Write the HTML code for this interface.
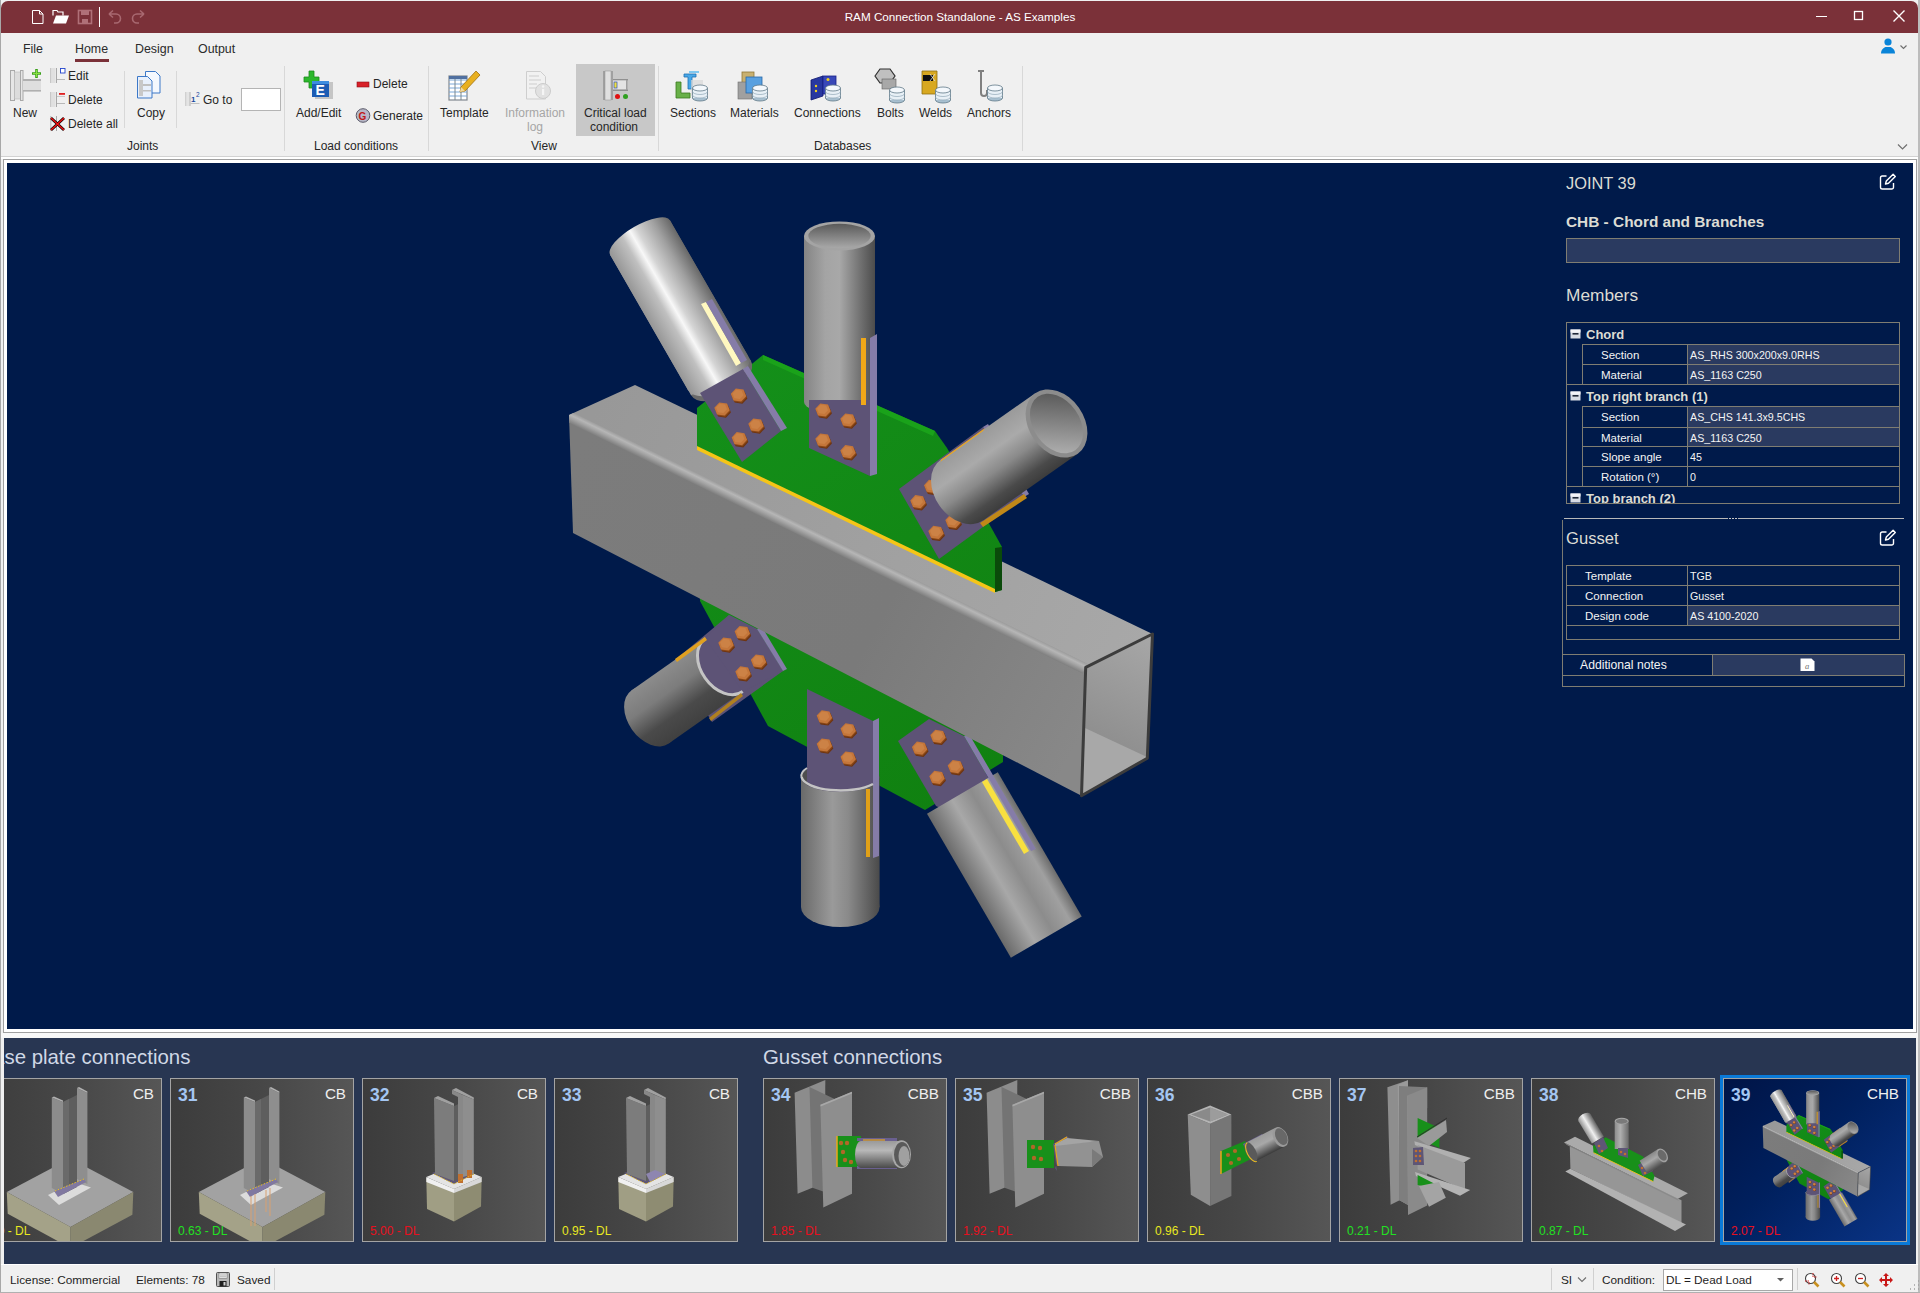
<!DOCTYPE html>
<html><head><meta charset="utf-8"><style>
*{margin:0;padding:0;box-sizing:border-box}
html,body{width:1920px;height:1293px;overflow:hidden;background:#f0f0f0;font-family:"Liberation Sans",sans-serif;color:#000}
.a{position:absolute;white-space:nowrap}
svg{position:absolute;overflow:visible}
</style></head><body>
<div class="a" style="left:0px;top:0px;width:1920px;height:1293px;background:#f0f0f0"></div>
<div class="a" style="left:1px;top:1px;width:1917px;height:32px;background:#7b3139;border-radius:7px 7px 0 0"></div>
<div class="a" style="left:660.0px;width:600px;text-align:center;top:10.41px;font-size:11.7px;line-height:13.07px;color:#ffffff;">RAM Connection Standalone - AS Examples</div>
<svg style="left:0;top:0" width="160" height="33">
<path d="M32.5 10.5h7l3.5 3.5v9.5h-10.5z M39.5 10.5v3.5h3.5" fill="none" stroke="#fff" stroke-width="1"/>
<path d="M53 15.5v-5h4l1 1.5h5v3.5" fill="none" stroke="#fff" stroke-width="1.2"/>
<path d="M53 23.5l3-8h13l-3 8z" fill="#fff"/>
<rect x="78.5" y="10.5" width="13" height="13" fill="none" stroke="#b07078" stroke-width="1.6"/>
<rect x="81" y="11" width="8" height="4" fill="#b07078"/><rect x="82" y="19" width="6" height="4" fill="#b07078"/>
<line x1="99.5" y1="7" x2="99.5" y2="27" stroke="#fff" stroke-width="1"/>
<path d="M109 14l4-3.5M109 14l4 3.5M109 14h7a4.5 4.5 0 0 1 0 9h-2" fill="none" stroke="#a86870" stroke-width="1.6"/>
<path d="M144 14l-4-3.5M144 14l-4 3.5M144 14h-7a4.5 4.5 0 0 0 0 9h2" fill="none" stroke="#a86870" stroke-width="1.6"/>
</svg>
<svg style="left:1780;top:0" width="140" height="33">
<line x1="36" y1="16.5" x2="47" y2="16.5" stroke="#fff" stroke-width="1"/>
<rect x="74.5" y="11.5" width="8" height="8" fill="none" stroke="#fff" stroke-width="1.3"/>
<path d="M113.5 10.5l11 11M124.5 10.5l-11 11" stroke="#fff" stroke-width="1.4"/>
</svg>
<div class="a" style="left:23.0px;top:42.58px;font-size:12.4px;line-height:13.85px;color:#2b2b2b;">File</div>
<div class="a" style="left:75.0px;top:42.58px;font-size:12.4px;line-height:13.85px;color:#2b2b2b;">Home</div>
<div class="a" style="left:75px;top:59px;width:34px;height:3px;background:#7b3139"></div>
<div class="a" style="left:135.0px;top:42.58px;font-size:12.4px;line-height:13.85px;color:#2b2b2b;">Design</div>
<div class="a" style="left:198.0px;top:42.58px;font-size:12.4px;line-height:13.85px;color:#2b2b2b;">Output</div>
<svg style="left:1870;top:36" width="50" height="20">
<circle cx="18" cy="6" r="3.6" fill="#0a84d8"/><path d="M11 17.5c0-4 3-6 4.5-6.5h5c1.5.5 4.5 2.5 4.5 6.5z" fill="#0a84d8"/>
<path d="M30.5 9.5l3 3 3-3" fill="none" stroke="#707070" stroke-width="1.2"/>
</svg>
<svg style="left:1895;top:140" width="20" height="14"><path d="M3 4.5l4.5 4.5 4.5-4.5" fill="none" stroke="#707070" stroke-width="1.2"/></svg>
<div class="a" style="left:124px;top:71px;width:1px;height:57px;background:#d8d8d8"></div>
<div class="a" style="left:176px;top:71px;width:1px;height:57px;background:#d8d8d8"></div>
<div class="a" style="left:284px;top:66px;width:1px;height:85px;background:#d8d8d8"></div>
<div class="a" style="left:428px;top:66px;width:1px;height:85px;background:#d8d8d8"></div>
<div class="a" style="left:658px;top:66px;width:1px;height:85px;background:#d8d8d8"></div>
<div class="a" style="left:1022px;top:66px;width:1px;height:85px;background:#d8d8d8"></div>
<svg style="left:0;top:60" width="180" height="80">
<rect x="10.5" y="10.5" width="4" height="30" fill="#e6e6e6" stroke="#a8a8a8"/>
<rect x="14.5" y="12" width="6" height="27" fill="#dcdcdc" stroke="#b8b8b8" stroke-width="0.6"/>
<rect x="20.5" y="10.5" width="2.5" height="30" fill="#e6e6e6" stroke="#a8a8a8"/>
<rect x="23" y="19" width="18" height="2" fill="#b0b0b0"/><rect x="23" y="21" width="18" height="9" fill="#dedede"/><rect x="23" y="30" width="18" height="1.6" fill="#b0b0b0"/>
<path d="M36.5 9v9M32 13.5h9" stroke="#3aa01a" stroke-width="2.6"/><path d="M36.5 10v7M33 13.5h7" stroke="#88e040" stroke-width="1.2"/>
<rect x="50" y="8" width="1.5" height="15" fill="#c8c8c8"/><rect x="51.5" y="8" width="4" height="15" fill="#e0e0e0"/><rect x="56" y="8" width="1" height="15" fill="#a8a8a8"/><rect x="57" y="19" width="8" height="1" fill="#b8b8b8"/>
<rect x="60.5" y="8.5" width="4.5" height="4.5" fill="#fff" stroke="#2244cc" stroke-width="0.9"/>
<rect x="50" y="32" width="1.5" height="15" fill="#c8c8c8"/><rect x="51.5" y="32" width="4" height="15" fill="#e0e0e0"/><rect x="56" y="32" width="1" height="15" fill="#a8a8a8"/><rect x="57" y="43" width="8" height="1" fill="#b8b8b8"/><rect x="57" y="36" width="8" height="1" fill="#c8c8c8"/>
<rect x="59" y="33" width="6" height="1.8" fill="#e02020"/>
<rect x="50" y="56" width="1.5" height="15" fill="#c8c8c8"/><rect x="56" y="56" width="1" height="15" fill="#a8a8a8"/>
<path d="M51 58l13 12M64 58l-13 12" stroke="#000" stroke-width="2.8"/><path d="M51 58l13 12M64 58l-13 12" stroke="#f01010" stroke-width="1.6"/>
<path d="M145.5 11.5h10l4.5 4.5v17h-14.5z" fill="#f4f8fe" stroke="#3c78c8"/>
<path d="M137.5 16.5h10l4.5 4.5v17h-14.5z" fill="#e8f0fc" stroke="#3c78c8"/>
<rect x="139" y="20" width="4" height="16" fill="#c8c8c8"/><rect x="143" y="24" width="8" height="2" fill="#c0c0c0"/><rect x="143" y="30" width="8" height="1.5" fill="#c0c0c0"/>
<rect x="185" y="32" width="1.5" height="14" fill="#d0d0d0"/>
</svg>
<div class="a" style="left:13.0px;top:106.94px;font-size:12px;line-height:13.40px;color:#262626;">New</div>
<div class="a" style="left:68.0px;top:69.94px;font-size:12px;line-height:13.40px;color:#262626;">Edit</div>
<div class="a" style="left:68.0px;top:93.94px;font-size:12px;line-height:13.40px;color:#262626;">Delete</div>
<div class="a" style="left:68.0px;top:117.94px;font-size:12px;line-height:13.40px;color:#262626;">Delete all</div>
<div class="a" style="left:137.0px;top:106.94px;font-size:12px;line-height:13.40px;color:#262626;">Copy</div>
<div class="a" style="left:127.0px;top:139.94px;font-size:12px;line-height:13.40px;color:#262626;">Joints</div>
<svg style="left:180;top:85" width="30" height="25">
<rect x="5" y="7" width="1.5" height="14" fill="#d0d0d0"/><rect x="6.5" y="7" width="3" height="14" fill="#e4e4e4"/><rect x="9.5" y="7" width="1" height="14" fill="#b0b0b0"/>
<rect x="10.5" y="18" width="9" height="1" fill="#c0c0c0"/>
<text x="11" y="17" font-size="8" fill="#1a4aa0" font-family="Liberation Sans" font-weight="bold">1</text><text x="16" y="12" font-size="6.5" fill="#1a4aa0" font-family="Liberation Sans">2</text>
</svg>
<div class="a" style="left:203.0px;top:93.94px;font-size:12px;line-height:13.40px;color:#262626;">Go to</div>
<div class="a" style="left:241px;top:88px;width:40px;height:23px;background:#fff;border:1px solid #b4b4b4"></div>
<svg style="left:290;top:60" width="140" height="70">
<path d="M14 17h5v-6h5v6h5v5h-5v6h-5v-6h-5z" fill="#2cb82c" stroke="#1c8c1c" stroke-width="0.8"/>
<rect x="25" y="22" width="18" height="17" fill="#999" opacity="0.5"/>
<rect x="22" y="21" width="17" height="16" fill="#1c5cb4"/><rect x="22" y="21" width="17" height="3" fill="#3c8ce0"/>
<text x="25.5" y="35" font-size="14" font-weight="bold" fill="#fff" font-family="Liberation Sans">E</text>
<rect x="67" y="22" width="12" height="5" fill="#d82028" stroke="#901018" stroke-width="0.6"/>
<circle cx="73" cy="55.5" r="6.8" fill="#b8b8c8" stroke="#585868" stroke-width="1"/>
<text x="68.6" y="60" font-size="10" font-weight="bold" fill="#c01818" font-family="Liberation Sans">G</text>
</svg>
<div class="a" style="left:296.0px;top:106.94px;font-size:12px;line-height:13.40px;color:#262626;">Add/Edit</div>
<div class="a" style="left:373.0px;top:77.94px;font-size:12px;line-height:13.40px;color:#262626;">Delete</div>
<div class="a" style="left:373.0px;top:109.94px;font-size:12px;line-height:13.40px;color:#262626;">Generate</div>
<div class="a" style="left:314.0px;top:139.94px;font-size:12px;line-height:13.40px;color:#262626;">Load conditions</div>
<div class="a" style="left:576px;top:64px;width:79px;height:72px;background:#c8c8c8"></div>
<svg style="left:440;top:60" width="220" height="50">
<rect x="9" y="16" width="18" height="24" fill="#fff" stroke="#808890" stroke-width="1.2"/>
<path d="M9 20h18M9 24h18M9 28h18M9 32h18M9 36h18" stroke="#7aa8d8" stroke-width="1"/>
<path d="M15 16v24M21 16v24" stroke="#7a8890" stroke-width="1"/>
<rect x="9" y="16" width="18" height="3" fill="#5070a0"/>
<path d="M21 27l15-16 4 4-15 16-5 1z" fill="#e8b020" stroke="#a07010" stroke-width="0.8"/>
<path d="M21 27l-1 5 5-1z" fill="#f0d8a0"/>
<g opacity="0.35"><path d="M86.5 11.5h14l5 5v22.5h-19z" fill="#f4f4f4" stroke="#909090"/>
<path d="M89 16h10M89 20h12M89 24h8M89 28h7" stroke="#909090"/><circle cx="103" cy="31" r="7.5" fill="#c8c8c8" stroke="#888"/><rect x="102" y="29" width="2.2" height="6" fill="#fff"/><circle cx="103.1" cy="26.5" r="1.2" fill="#fff"/></g>
<rect x="163" y="11" width="2" height="29" fill="#a0a0a0"/><rect x="165" y="11" width="6" height="29" fill="#e0e0e0" stroke="#909090" stroke-width="0.5"/><rect x="171" y="11" width="2" height="29" fill="#a0a0a0"/>
<rect x="173" y="19" width="15" height="1.5" fill="#909090"/><rect x="173" y="20.5" width="14" height="9" fill="#e4e4e4"/><rect x="173" y="29.5" width="15" height="1.5" fill="#909090"/><rect x="186" y="20" width="1.5" height="10" fill="#a0a0a0"/>
<rect x="174" y="22" width="3" height="6" fill="#f0e040" stroke="#3050c0" stroke-width="0.7"/>
<circle cx="177.5" cy="36.5" r="2.5" fill="#e01010"/><circle cx="185.5" cy="36.5" r="2.5" fill="#30a020"/>
</svg>
<div class="a" style="left:440.0px;top:106.94px;font-size:12px;line-height:13.40px;color:#262626;">Template</div>
<div class="a" style="left:505.0px;top:106.94px;font-size:12px;line-height:13.40px;color:#a6a6a6;">Information</div>
<div class="a" style="left:527.0px;top:120.94px;font-size:12px;line-height:13.40px;color:#a6a6a6;">log</div>
<div class="a" style="left:584.0px;top:106.94px;font-size:12px;line-height:13.40px;color:#262626;">Critical load</div>
<div class="a" style="left:590.0px;top:120.94px;font-size:12px;line-height:13.40px;color:#262626;">condition</div>
<div class="a" style="left:531.0px;top:139.94px;font-size:12px;line-height:13.40px;color:#262626;">View</div>
<svg style="left:660;top:60" width="370" height="50">
<path d="M16 22v16h14v-5h-9v-11z" fill="#68b048" stroke="#3a7a20" stroke-width="0.8"/>
<path d="M24 14h12v3h-4v12h-4v-12h-4z" fill="#48a8e8" stroke="#2070b0" stroke-width="0.8"/>
<path d="M29 12h10" stroke="#80c8f0" stroke-width="2"/>
<rect x="31" y="20" width="12" height="16" fill="#d8d8d8" opacity="0.7"/>
<g><ellipse cx="40" cy="38" rx="7.5" ry="3" fill="#a8c0d0" stroke="#607888" stroke-width="0.8"/>
<rect x="32.5" y="28" width="15" height="10" fill="#e8f0f6"/><path d="M32.5 28v10M47.5 28v10" stroke="#607888" stroke-width="0.8"/>
<path d="M32.5 31.5a7.5 3 0 0 0 15 0M32.5 35a7.5 3 0 0 0 15 0" fill="none" stroke="#90a8b8" stroke-width="0.7"/>
<ellipse cx="40" cy="28" rx="7.5" ry="3" fill="#f4f8fc" stroke="#607888" stroke-width="0.8"/></g>
<rect x="82" y="12" width="12" height="12" fill="#c8b070" stroke="#907838" stroke-width="0.8"/>
<rect x="78" y="22" width="14" height="17" fill="#a0a0a0" stroke="#707070" stroke-width="0.6"/>
<rect x="86" y="17" width="16" height="16" fill="#58a0e0" stroke="#2868a8" stroke-width="0.8"/>
<g><ellipse cx="100" cy="38" rx="7.5" ry="3" fill="#a8c0d0" stroke="#607888" stroke-width="0.8"/>
<rect x="92.5" y="28" width="15" height="10" fill="#e8f0f6"/><path d="M92.5 28v10M107.5 28v10" stroke="#607888" stroke-width="0.8"/>
<path d="M92.5 31.5a7.5 3 0 0 0 15 0M92.5 35a7.5 3 0 0 0 15 0" fill="none" stroke="#90a8b8" stroke-width="0.7"/>
<ellipse cx="100" cy="28" rx="7.5" ry="3" fill="#f4f8fc" stroke="#607888" stroke-width="0.8"/></g>
<path d="M151 20l12-4v20l-12 4z" fill="#2838a0" stroke="#101870" stroke-width="0.8"/>
<rect x="163" y="16" width="13" height="18" fill="#3848b8" stroke="#182088" stroke-width="0.8"/>
<circle cx="168" cy="19.5" r="1.5" fill="#f0d020"/><circle cx="156" cy="26" r="1.2" fill="#f0d020"/><circle cx="156" cy="31" r="1.2" fill="#f0d020"/>
<g><ellipse cx="173" cy="38" rx="7.5" ry="3" fill="#a8c0d0" stroke="#607888" stroke-width="0.8"/>
<rect x="165.5" y="28" width="15" height="10" fill="#e8f0f6"/><path d="M165.5 28v10M180.5 28v10" stroke="#607888" stroke-width="0.8"/>
<path d="M165.5 31.5a7.5 3 0 0 0 15 0M165.5 35a7.5 3 0 0 0 15 0" fill="none" stroke="#90a8b8" stroke-width="0.7"/>
<ellipse cx="173" cy="28" rx="7.5" ry="3" fill="#f4f8fc" stroke="#607888" stroke-width="0.8"/></g>
<path d="M215 16l5-7h10l5 7-5 7h-10z" fill="#c0c0c0" stroke="#303030" stroke-width="1.2"/>
<rect x="222" y="19" width="14" height="10" fill="#a8a8a8" stroke="#606060" stroke-width="0.6"/>
<g><ellipse cx="237" cy="40" rx="7.5" ry="3" fill="#a8c0d0" stroke="#607888" stroke-width="0.8"/>
<rect x="229.5" y="30" width="15" height="10" fill="#e8f0f6"/><path d="M229.5 30v10M244.5 30v10" stroke="#607888" stroke-width="0.8"/>
<path d="M229.5 33.5a7.5 3 0 0 0 15 0M229.5 37a7.5 3 0 0 0 15 0" fill="none" stroke="#90a8b8" stroke-width="0.7"/>
<ellipse cx="237" cy="30" rx="7.5" ry="3" fill="#f4f8fc" stroke="#607888" stroke-width="0.8"/></g>
<path d="M262 11h15v23h-15z" fill="#d8a820" stroke="#907010" stroke-width="0.8"/>
<rect x="263" y="15" width="10" height="6" fill="#101010"/><path d="M270 14l5 7M275 14l-5 7" stroke="#e0e0e0" stroke-width="0.8"/>
<g><ellipse cx="283" cy="40" rx="7.5" ry="3" fill="#a8c0d0" stroke="#607888" stroke-width="0.8"/>
<rect x="275.5" y="30" width="15" height="10" fill="#e8f0f6"/><path d="M275.5 30v10M290.5 30v10" stroke="#607888" stroke-width="0.8"/>
<path d="M275.5 33.5a7.5 3 0 0 0 15 0M275.5 37a7.5 3 0 0 0 15 0" fill="none" stroke="#90a8b8" stroke-width="0.7"/>
<ellipse cx="283" cy="30" rx="7.5" ry="3" fill="#f4f8fc" stroke="#607888" stroke-width="0.8"/></g>
<path d="M318 11h6M321 11v22a3 3 0 0 0 6 0v-3" fill="none" stroke="#808080" stroke-width="2"/>
<g><ellipse cx="335" cy="38" rx="7.5" ry="3" fill="#a8c0d0" stroke="#607888" stroke-width="0.8"/>
<rect x="327.5" y="28" width="15" height="10" fill="#e8f0f6"/><path d="M327.5 28v10M342.5 28v10" stroke="#607888" stroke-width="0.8"/>
<path d="M327.5 31.5a7.5 3 0 0 0 15 0M327.5 35a7.5 3 0 0 0 15 0" fill="none" stroke="#90a8b8" stroke-width="0.7"/>
<ellipse cx="335" cy="28" rx="7.5" ry="3" fill="#f4f8fc" stroke="#607888" stroke-width="0.8"/></g>
</svg>
<div class="a" style="left:670.0px;top:106.94px;font-size:12px;line-height:13.40px;color:#262626;">Sections</div>
<div class="a" style="left:730.0px;top:106.94px;font-size:12px;line-height:13.40px;color:#262626;">Materials</div>
<div class="a" style="left:794.0px;top:106.94px;font-size:12px;line-height:13.40px;color:#262626;">Connections</div>
<div class="a" style="left:877.0px;top:106.94px;font-size:12px;line-height:13.40px;color:#262626;">Bolts</div>
<div class="a" style="left:919.0px;top:106.94px;font-size:12px;line-height:13.40px;color:#262626;">Welds</div>
<div class="a" style="left:967.0px;top:106.94px;font-size:12px;line-height:13.40px;color:#262626;">Anchors</div>
<div class="a" style="left:814.0px;top:139.94px;font-size:12px;line-height:13.40px;color:#262626;">Databases</div>
<div class="a" style="left:1px;top:156px;width:1917px;height:1px;background:#d2d2d2"></div>
<div class="a" style="left:1px;top:157px;width:1917px;height:2px;background:#ffffff"></div>
<div class="a" style="left:3px;top:159px;width:1914px;height:874px;background:#fff;border:1px solid #a0a0a0"></div>
<div class="a" style="left:1px;top:1033px;width:1917px;height:5px;background:#f8f8f8"></div>
<div class="a" style="left:0px;top:0px;width:1px;height:1293px;background:#a8a8a8"></div>
<div class="a" style="left:1918px;top:0px;width:2px;height:1293px;background:#bcbcbc"></div>
<div class="a" style="left:7px;top:163px;width:1906px;height:866px;background:#001a4a"></div>
<svg style="left:0;top:0" width="1920" height="1293"><defs><clipPath id="vpc"><rect x="7" y="163" width="1906" height="866"/></clipPath><linearGradient id="g1" gradientUnits="userSpaceOnUse" x1="700" y1="360" x2="1000" y2="800"><stop offset="0" stop-color="#14901a"/><stop offset="1" stop-color="#108010"/></linearGradient><linearGradient id="g2" gradientUnits="userSpaceOnUse" x1="-32.5" y1="0" x2="32.5" y2="0"><stop offset="0" stop-color="#8c8c8c"/><stop offset="0.35" stop-color="#7c7c7c"/><stop offset="0.7" stop-color="#4a4a4a"/><stop offset="1" stop-color="#404040"/></linearGradient><linearGradient id="g3" gradientUnits="userSpaceOnUse" x1="-39.3" y1="0" x2="39.3" y2="0"><stop offset="0" stop-color="#6a6a6a"/><stop offset="0.4" stop-color="#9a9a9a"/><stop offset="0.6" stop-color="#8a8a8a"/><stop offset="0.9" stop-color="#5a5a5a"/><stop offset="1" stop-color="#4a4a4a"/></linearGradient><linearGradient id="g4" gradientUnits="userSpaceOnUse" x1="-41" y1="0" x2="41" y2="0"><stop offset="0" stop-color="#6a6a6a"/><stop offset="0.35" stop-color="#a8a8a8"/><stop offset="0.6" stop-color="#8c8c8c"/><stop offset="0.85" stop-color="#a0a0a0"/><stop offset="1" stop-color="#6c6c6c"/></linearGradient><linearGradient id="g5" gradientUnits="userSpaceOnUse" x1="600" y1="400" x2="1150" y2="650"><stop offset="0" stop-color="#989898"/><stop offset="1" stop-color="#a8a8a8"/></linearGradient><linearGradient id="g6" gradientUnits="userSpaceOnUse" x1="573" y1="450" x2="1085" y2="730"><stop offset="0" stop-color="#7c7c7c"/><stop offset="0.6" stop-color="#7a7a7a"/><stop offset="1" stop-color="#888888"/></linearGradient><linearGradient id="g7" gradientUnits="userSpaceOnUse" x1="570.7544" y1="411.408" x2="565.9298" y2="421.286"><stop offset="0" stop-color="#9c9c9c"/><stop offset="0.3" stop-color="#b6b6b6"/><stop offset="0.55" stop-color="#a4a4a4"/><stop offset="1" stop-color="#7e7e7e"/></linearGradient><clipPath id="chc"><polygon points="635,385 1152.5,634 1147.3,758.2 1081.5,795.7 573,533 569,415"/></clipPath><linearGradient id="g8" gradientUnits="userSpaceOnUse" x1="1150" y1="640" x2="1090" y2="760"><stop offset="0" stop-color="#a6a6a6"/><stop offset="1" stop-color="#8a8a8a"/></linearGradient><linearGradient id="g9" gradientUnits="userSpaceOnUse" x1="-34.5" y1="0" x2="34.5" y2="0"><stop offset="0" stop-color="#969696"/><stop offset="0.28" stop-color="#c0c0c0"/><stop offset="0.42" stop-color="#f8f8f8"/><stop offset="0.52" stop-color="#d4d4d4"/><stop offset="0.78" stop-color="#a0a0a0"/><stop offset="1" stop-color="#686868"/></linearGradient><linearGradient id="g10" gradientUnits="userSpaceOnUse" x1="-34.5" y1="0" x2="34.5" y2="0"><stop offset="0" stop-color="#969696"/><stop offset="0.28" stop-color="#c0c0c0"/><stop offset="0.42" stop-color="#f8f8f8"/><stop offset="0.52" stop-color="#d4d4d4"/><stop offset="0.78" stop-color="#a0a0a0"/><stop offset="1" stop-color="#686868"/></linearGradient><linearGradient id="g11" gradientUnits="userSpaceOnUse" x1="0" y1="-12" x2="0" y2="12"><stop offset="0" stop-color="#5a5a5a"/><stop offset="1" stop-color="#a8a8a8"/></linearGradient><linearGradient id="g12" gradientUnits="userSpaceOnUse" x1="-35.5" y1="0" x2="35.5" y2="0"><stop offset="0" stop-color="#848484"/><stop offset="0.3" stop-color="#a4a4a4"/><stop offset="0.5" stop-color="#a8a8a8"/><stop offset="0.8" stop-color="#707070"/><stop offset="1" stop-color="#4c4c4c"/></linearGradient><linearGradient id="g13" gradientUnits="userSpaceOnUse" x1="-25" y1="-20" x2="25" y2="20"><stop offset="0" stop-color="#585858"/><stop offset="1" stop-color="#b0b0b0"/></linearGradient><linearGradient id="g14" gradientUnits="userSpaceOnUse" x1="-37" y1="0" x2="37" y2="0"><stop offset="0" stop-color="#9a9a9a"/><stop offset="0.3" stop-color="#aaaaaa"/><stop offset="0.55" stop-color="#8a8a8a"/><stop offset="0.85" stop-color="#4a4a4a"/><stop offset="1" stop-color="#3c3c3c"/></linearGradient></defs><g clip-path="url(#vpc)"><polygon points="697.0,440.0 1003.0,590.0 1003.0,762.0 925.0,810.0 768.0,726.0 700.0,601.0" fill="url(#g1)" />
<polygon points="729.0,615.0 757.0,629.0 783.0,671.0 712.0,722.0 675.0,660.0" fill="#5d5376" />
<g transform="translate(724.0,665.0) rotate(54.90)"><ellipse cx="0" cy="90.4" rx="32.5" ry="22" fill="url(#g2)"/><rect x="-32.5" y="0" width="65.0" height="90.4" fill="url(#g2)"/><ellipse cx="0" cy="0" rx="32.5" ry="23" fill="#5d5376"/></g>
<polygon points="729.0,615.0 757.0,629.0 783.0,671.0 742.7,691.6 705.3,638.4" fill="#5d5376" />
<polygon points="757.0,629.0 762.0,627.0 787.0,669.0 783.0,671.0" fill="#857ca8" />
<g transform="translate(724,665) rotate(54.9)"><path d="M-32.5 0 A32.5 23 0 0 0 32.5 0" fill="none" stroke="#c4c4c4" stroke-width="3"/></g>
<polygon points="675.0,659.0 705.0,637.0 707.0,640.0 677.0,662.0" fill="#e0a020" />
<polygon points="709.0,718.0 741.0,693.0 743.0,696.0 711.0,721.0" fill="#b08020" />
<g><polygon points="751.2,635.9 746.2,641.3 738.5,640.1 735.8,633.5 740.8,628.1 748.5,629.3" fill="#6e3410"/><polygon points="750.6,634.8 745.6,640.2 737.9,639.0 735.2,632.4 740.2,627.0 747.9,628.2" fill="#8a4818"/><polygon points="750.0,633.7 745.0,639.1 737.3,637.9 734.6,631.3 739.6,625.9 747.3,627.1" fill="#c4763a"/><polygon points="747.3,632.8 743.7,636.6 738.2,635.8 736.3,631.0 739.9,627.2 745.4,628.0" fill="#cc8246"/></g>
<g><polygon points="734.9,647.4 729.9,652.8 722.2,651.6 719.5,645.0 724.5,639.6 732.2,640.8" fill="#6e3410"/><polygon points="734.3,646.3 729.3,651.7 721.6,650.5 718.9,643.9 723.9,638.5 731.6,639.7" fill="#8a4818"/><polygon points="733.7,645.2 728.7,650.6 721.0,649.4 718.3,642.8 723.3,637.4 731.0,638.6" fill="#c4763a"/><polygon points="731.0,644.3 727.4,648.1 721.9,647.3 720.0,642.5 723.6,638.7 729.1,639.5" fill="#cc8246"/></g>
<g><polygon points="767.4,664.4 762.4,669.8 754.7,668.6 752.0,662.0 757.0,656.6 764.7,657.8" fill="#6e3410"/><polygon points="766.8,663.3 761.8,668.7 754.1,667.5 751.4,660.9 756.4,655.5 764.1,656.7" fill="#8a4818"/><polygon points="766.2,662.2 761.2,667.6 753.5,666.4 750.8,659.8 755.8,654.4 763.5,655.6" fill="#c4763a"/><polygon points="763.5,661.3 759.9,665.1 754.4,664.3 752.5,659.5 756.1,655.7 761.6,656.5" fill="#cc8246"/></g>
<g><polygon points="751.9,676.2 746.9,681.6 739.2,680.4 736.5,673.8 741.5,668.4 749.2,669.6" fill="#6e3410"/><polygon points="751.3,675.1 746.3,680.5 738.6,679.3 735.9,672.7 740.9,667.3 748.6,668.5" fill="#8a4818"/><polygon points="750.7,674.0 745.7,679.4 738.0,678.2 735.3,671.6 740.3,666.2 748.0,667.4" fill="#c4763a"/><polygon points="748.0,673.1 744.4,676.9 738.9,676.1 737.0,671.3 740.6,667.5 746.1,668.3" fill="#cc8246"/></g>
<g transform="translate(840.3,777.0) rotate(-0.00)"><ellipse cx="0" cy="130.0" rx="39.3" ry="20" fill="url(#g3)"/><rect x="-39.3" y="0" width="78.6" height="130.0" fill="url(#g3)"/><ellipse cx="0" cy="0" rx="39.3" ry="15" fill="#4e4e4e"/></g>
<path d="M807 689 L873 721 L873 785 A39.3 15 0 0 1 807 785 Z" fill="#5d5376"/>
<polygon points="873.0,721.0 879.0,718.0 879.0,856.0 873.0,858.0" fill="#857ca8" />
<path d="M801.5 777 A39.3 15 0 0 0 873 784" fill="none" stroke="#c4c4c4" stroke-width="2.5"/>
<path d="M801.5 777 A39.3 15 0 0 1 807 768" fill="none" stroke="#c4c4c4" stroke-width="2"/>
<polygon points="866.0,789.0 870.0,789.0 870.0,857.0 866.0,857.0" fill="#e0a018" />
<g><polygon points="833.3,720.2 828.3,725.6 820.6,724.4 817.9,717.8 822.9,712.4 830.6,713.6" fill="#6e3410"/><polygon points="832.7,719.1 827.7,724.5 820.0,723.3 817.3,716.7 822.3,711.3 830.0,712.5" fill="#8a4818"/><polygon points="832.1,718.0 827.1,723.4 819.4,722.2 816.7,715.6 821.7,710.2 829.4,711.4" fill="#c4763a"/><polygon points="829.4,717.1 825.8,720.9 820.3,720.1 818.4,715.3 822.0,711.5 827.5,712.3" fill="#cc8246"/></g>
<g><polygon points="857.1,733.2 852.1,738.6 844.4,737.4 841.7,730.8 846.7,725.4 854.4,726.6" fill="#6e3410"/><polygon points="856.5,732.1 851.5,737.5 843.8,736.3 841.1,729.7 846.1,724.3 853.8,725.5" fill="#8a4818"/><polygon points="855.9,731.0 850.9,736.4 843.2,735.2 840.5,728.6 845.5,723.2 853.2,724.4" fill="#c4763a"/><polygon points="853.2,730.1 849.6,733.9 844.1,733.1 842.2,728.3 845.8,724.5 851.3,725.3" fill="#cc8246"/></g>
<g><polygon points="833.3,748.4 828.3,753.8 820.6,752.6 817.9,746.0 822.9,740.6 830.6,741.8" fill="#6e3410"/><polygon points="832.7,747.3 827.7,752.7 820.0,751.5 817.3,744.9 822.3,739.5 830.0,740.7" fill="#8a4818"/><polygon points="832.1,746.2 827.1,751.6 819.4,750.4 816.7,743.8 821.7,738.4 829.4,739.6" fill="#c4763a"/><polygon points="829.4,745.3 825.8,749.1 820.3,748.3 818.4,743.5 822.0,739.7 827.5,740.5" fill="#cc8246"/></g>
<g><polygon points="857.1,761.4 852.1,766.8 844.4,765.6 841.7,759.0 846.7,753.6 854.4,754.8" fill="#6e3410"/><polygon points="856.5,760.3 851.5,765.7 843.8,764.5 841.1,757.9 846.1,752.5 853.8,753.7" fill="#8a4818"/><polygon points="855.9,759.2 850.9,764.6 843.2,763.4 840.5,756.8 845.5,751.4 853.2,752.6" fill="#c4763a"/><polygon points="853.2,758.3 849.6,762.1 844.1,761.3 842.2,756.5 845.8,752.7 851.3,753.5" fill="#cc8246"/></g>
<polygon points="898.0,741.0 929.0,719.0 964.0,736.0 1031.0,851.0 936.0,806.0" fill="#5d5376" />
<g transform="translate(962.4,793.0) rotate(-30.23)"><rect x="-41" y="0" width="82" height="166.7" fill="url(#g4)"/></g>
<polygon points="964.0,736.0 969.0,734.0 1036.0,849.0 1031.0,851.0" fill="#857ca8" />
<polygon points="982.0,782.0 987.0,779.0 1029.0,851.0 1024.0,854.0" fill="#f8e040" />
<g><polygon points="928.5,751.6 923.5,757.0 915.8,755.8 913.1,749.2 918.1,743.8 925.8,745.0" fill="#6e3410"/><polygon points="927.9,750.5 922.9,755.9 915.2,754.7 912.5,748.1 917.5,742.7 925.2,743.9" fill="#8a4818"/><polygon points="927.3,749.4 922.3,754.8 914.6,753.6 911.9,747.0 916.9,741.6 924.6,742.8" fill="#c4763a"/><polygon points="924.6,748.5 921.0,752.3 915.5,751.5 913.6,746.7 917.2,742.9 922.7,743.7" fill="#cc8246"/></g>
<g><polygon points="946.9,739.7 941.9,745.1 934.2,743.9 931.5,737.3 936.5,731.9 944.2,733.1" fill="#6e3410"/><polygon points="946.3,738.6 941.3,744.0 933.6,742.8 930.9,736.2 935.9,730.8 943.6,732.0" fill="#8a4818"/><polygon points="945.7,737.5 940.7,742.9 933.0,741.7 930.3,735.1 935.3,729.7 943.0,730.9" fill="#c4763a"/><polygon points="943.0,736.6 939.4,740.4 933.9,739.6 932.0,734.8 935.6,731.0 941.1,731.8" fill="#cc8246"/></g>
<g><polygon points="945.9,780.8 940.9,786.2 933.2,785.0 930.5,778.4 935.5,773.0 943.2,774.2" fill="#6e3410"/><polygon points="945.3,779.7 940.3,785.1 932.6,783.9 929.9,777.3 934.9,771.9 942.6,773.1" fill="#8a4818"/><polygon points="944.7,778.6 939.7,784.0 932.0,782.8 929.3,776.2 934.3,770.8 942.0,772.0" fill="#c4763a"/><polygon points="942.0,777.7 938.4,781.5 932.9,780.7 931.0,775.9 934.6,772.1 940.1,772.9" fill="#cc8246"/></g>
<g><polygon points="964.3,770.0 959.3,775.4 951.6,774.2 948.9,767.6 953.9,762.2 961.6,763.4" fill="#6e3410"/><polygon points="963.7,768.9 958.7,774.3 951.0,773.1 948.3,766.5 953.3,761.1 961.0,762.3" fill="#8a4818"/><polygon points="963.1,767.8 958.1,773.2 950.4,772.0 947.7,765.4 952.7,760.0 960.4,761.2" fill="#c4763a"/><polygon points="960.4,766.9 956.8,770.7 951.3,769.9 949.4,765.1 953.0,761.3 958.5,762.1" fill="#cc8246"/></g>
<polygon points="635.0,385.0 1152.5,634.0 1085.7,667.3 569.0,415.0" fill="url(#g5)" />
<polygon points="569.0,415.0 1085.7,667.3 1081.5,795.7 573.0,533.0" fill="url(#g6)" />
<g clip-path="url(#chc)">
<polygon points="570.8,411.4 1087.5,663.7 1082.6,673.6 565.9,421.3" fill="url(#g7)" />
</g>
<polygon points="1085.7,667.3 1152.5,634.0 1147.3,758.2 1081.5,795.7" fill="url(#g8)" />
<polygon points="1085.0,728.0 1147.0,757.0 1082.0,795.0" fill="#a8a8a8" />
<polygon points="1085.7,667.3 1152.5,634.0 1147.3,758.2 1081.5,795.7" fill="none" stroke="#3c3c3c" stroke-width="3" stroke-linejoin="round"/>
<polygon points="697.0,408.0 763.0,355.0 935.0,431.0 947.0,448.0 1002.0,547.0 1002.0,590.0 995.0,592.0 697.0,449.0" fill="url(#g1)" />
<polygon points="763.0,355.0 935.0,431.0 933.0,436.0 763.0,360.0" fill="#1aa21a" />
<polygon points="995.0,548.0 1002.0,547.0 1002.0,590.0 995.0,592.0" fill="#0a4a0a" />
<polygon points="697.0,446.0 995.0,589.0 995.0,593.0 697.0,450.0" fill="#f5c518" />
<g transform="translate(640.0,237.5) rotate(-29.96)"><ellipse cx="0" cy="162.2" rx="34.5" ry="18" fill="#6a6a6a"/><rect x="-34.5" y="0" width="69.0" height="162.2" fill="url(#g9)"/><ellipse cx="0" cy="0" rx="34.5" ry="12" fill="url(#g9)"/></g>
<g transform="translate(640.0,237.5) rotate(-29.93)"><ellipse cx="0" cy="156.3" rx="34.5" ry="18" fill="url(#g10)"/><rect x="-34.5" y="0" width="69.0" height="156.3" fill="url(#g10)"/></g>
<polygon points="701.0,304.0 706.0,302.0 741.0,363.0 736.0,366.0" fill="#fff8c0" />
<polygon points="706.0,302.0 712.0,299.0 747.0,360.0 741.0,363.0" fill="#857ca8" />
<g transform="translate(839.5,236.0) rotate(-0.00)"><ellipse cx="0" cy="166.0" rx="35.5" ry="12" fill="url(#g12)"/><rect x="-35.5" y="0" width="71.0" height="166.0" fill="url(#g12)"/><ellipse cx="0" cy="0" rx="35.5" ry="14.5" fill="#a4a4a4"/><ellipse cx="0" cy="0" rx="31.2" ry="12.2" fill="url(#g11)"/></g>
<polygon points="809.0,400.0 870.0,400.0 870.0,476.0 809.0,448.0" fill="#5d5376" />
<polygon points="870.0,338.0 877.0,334.0 877.0,474.0 870.0,476.0" fill="#857ca8" />
<polygon points="861.0,338.0 866.0,338.0 866.0,405.0 861.0,405.0" fill="#f0a818" />
<g><polygon points="831.9,413.4 826.9,418.8 819.2,417.6 816.5,411.0 821.5,405.6 829.2,406.8" fill="#6e3410"/><polygon points="831.3,412.3 826.3,417.7 818.6,416.5 815.9,409.9 820.9,404.5 828.6,405.7" fill="#8a4818"/><polygon points="830.7,411.2 825.7,416.6 818.0,415.4 815.3,408.8 820.3,403.4 828.0,404.6" fill="#c4763a"/><polygon points="828.0,410.3 824.4,414.1 818.9,413.3 817.0,408.5 820.6,404.7 826.1,405.5" fill="#cc8246"/></g>
<g><polygon points="856.9,423.4 851.9,428.8 844.2,427.6 841.5,421.0 846.5,415.6 854.2,416.8" fill="#6e3410"/><polygon points="856.3,422.3 851.3,427.7 843.6,426.5 840.9,419.9 845.9,414.5 853.6,415.7" fill="#8a4818"/><polygon points="855.7,421.2 850.7,426.6 843.0,425.4 840.3,418.8 845.3,413.4 853.0,414.6" fill="#c4763a"/><polygon points="853.0,420.3 849.4,424.1 843.9,423.3 842.0,418.5 845.6,414.7 851.1,415.5" fill="#cc8246"/></g>
<g><polygon points="831.9,443.4 826.9,448.8 819.2,447.6 816.5,441.0 821.5,435.6 829.2,436.8" fill="#6e3410"/><polygon points="831.3,442.3 826.3,447.7 818.6,446.5 815.9,439.9 820.9,434.5 828.6,435.7" fill="#8a4818"/><polygon points="830.7,441.2 825.7,446.6 818.0,445.4 815.3,438.8 820.3,433.4 828.0,434.6" fill="#c4763a"/><polygon points="828.0,440.3 824.4,444.1 818.9,443.3 817.0,438.5 820.6,434.7 826.1,435.5" fill="#cc8246"/></g>
<g><polygon points="856.9,455.1 851.9,460.5 844.2,459.3 841.5,452.7 846.5,447.3 854.2,448.5" fill="#6e3410"/><polygon points="856.3,454.0 851.3,459.4 843.6,458.2 840.9,451.6 845.9,446.2 853.6,447.4" fill="#8a4818"/><polygon points="855.7,452.9 850.7,458.3 843.0,457.1 840.3,450.5 845.3,445.1 853.0,446.3" fill="#c4763a"/><polygon points="853.0,452.0 849.4,455.8 843.9,455.0 842.0,450.2 845.6,446.4 851.1,447.2" fill="#cc8246"/></g>
<polygon points="700.0,393.0 743.0,369.0 781.0,431.0 742.0,462.0" fill="#5d5376" />
<polygon points="743.0,369.0 748.0,366.0 787.0,428.0 781.0,431.0" fill="#857ca8" />
<g><polygon points="747.4,398.4 742.4,403.8 734.7,402.6 732.0,396.0 737.0,390.6 744.7,391.8" fill="#6e3410"/><polygon points="746.8,397.3 741.8,402.7 734.1,401.5 731.4,394.9 736.4,389.5 744.1,390.7" fill="#8a4818"/><polygon points="746.2,396.2 741.2,401.6 733.5,400.4 730.8,393.8 735.8,388.4 743.5,389.6" fill="#c4763a"/><polygon points="743.5,395.3 739.9,399.1 734.4,398.3 732.5,393.5 736.1,389.7 741.6,390.5" fill="#cc8246"/></g>
<g><polygon points="730.9,412.4 725.9,417.8 718.2,416.6 715.5,410.0 720.5,404.6 728.2,405.8" fill="#6e3410"/><polygon points="730.3,411.3 725.3,416.7 717.6,415.5 714.9,408.9 719.9,403.5 727.6,404.7" fill="#8a4818"/><polygon points="729.7,410.2 724.7,415.6 717.0,414.4 714.3,407.8 719.3,402.4 727.0,403.6" fill="#c4763a"/><polygon points="727.0,409.3 723.4,413.1 717.9,412.3 716.0,407.5 719.6,403.7 725.1,404.5" fill="#cc8246"/></g>
<g><polygon points="764.9,428.4 759.9,433.8 752.2,432.6 749.5,426.0 754.5,420.6 762.2,421.8" fill="#6e3410"/><polygon points="764.3,427.3 759.3,432.7 751.6,431.5 748.9,424.9 753.9,419.5 761.6,420.7" fill="#8a4818"/><polygon points="763.7,426.2 758.7,431.6 751.0,430.4 748.3,423.8 753.3,418.4 761.0,419.6" fill="#c4763a"/><polygon points="761.0,425.3 757.4,429.1 751.9,428.3 750.0,423.5 753.6,419.7 759.1,420.5" fill="#cc8246"/></g>
<g><polygon points="748.3,442.0 743.3,447.4 735.6,446.2 732.9,439.6 737.9,434.2 745.6,435.4" fill="#6e3410"/><polygon points="747.7,440.9 742.7,446.3 735.0,445.1 732.3,438.5 737.3,433.1 745.0,434.3" fill="#8a4818"/><polygon points="747.1,439.8 742.1,445.2 734.4,444.0 731.7,437.4 736.7,432.0 744.4,433.2" fill="#c4763a"/><polygon points="744.4,438.9 740.8,442.7 735.3,441.9 733.4,437.1 737.0,433.3 742.5,434.1" fill="#cc8246"/></g>
<polygon points="899.0,489.0 983.0,427.0 1024.0,497.0 939.0,559.0" fill="#5d5376" />
<polygon points="983.0,427.0 988.0,424.0 1029.0,494.0 1024.0,497.0" fill="#857ca8" />
<g><polygon points="926.9,505.1 921.9,510.5 914.2,509.3 911.5,502.7 916.5,497.3 924.2,498.5" fill="#6e3410"/><polygon points="926.3,504.0 921.3,509.4 913.6,508.2 910.9,501.6 915.9,496.2 923.6,497.4" fill="#8a4818"/><polygon points="925.7,502.9 920.7,508.3 913.0,507.1 910.3,500.5 915.3,495.1 923.0,496.3" fill="#c4763a"/><polygon points="923.0,502.0 919.4,505.8 913.9,505.0 912.0,500.2 915.6,496.4 921.1,497.2" fill="#cc8246"/></g>
<g><polygon points="944.9,535.7 939.9,541.1 932.2,539.9 929.5,533.3 934.5,527.9 942.2,529.1" fill="#6e3410"/><polygon points="944.3,534.6 939.3,540.0 931.6,538.8 928.9,532.2 933.9,526.8 941.6,528.0" fill="#8a4818"/><polygon points="943.7,533.5 938.7,538.9 931.0,537.7 928.3,531.1 933.3,525.7 941.0,526.9" fill="#c4763a"/><polygon points="941.0,532.6 937.4,536.4 931.9,535.6 930.0,530.8 933.6,527.0 939.1,527.8" fill="#cc8246"/></g>
<g><polygon points="940.6,489.8 935.6,495.2 927.9,494.0 925.2,487.4 930.2,482.0 937.9,483.2" fill="#6e3410"/><polygon points="940.0,488.7 935.0,494.1 927.3,492.9 924.6,486.3 929.6,480.9 937.3,482.1" fill="#8a4818"/><polygon points="939.4,487.6 934.4,493.0 926.7,491.8 924.0,485.2 929.0,479.8 936.7,481.0" fill="#c4763a"/><polygon points="936.7,486.7 933.1,490.5 927.6,489.7 925.7,484.9 929.3,481.1 934.8,481.9" fill="#cc8246"/></g>
<g><polygon points="961.9,524.7 956.9,530.1 949.2,528.9 946.5,522.3 951.5,516.9 959.2,518.1" fill="#6e3410"/><polygon points="961.3,523.6 956.3,529.0 948.6,527.8 945.9,521.2 950.9,515.8 958.6,517.0" fill="#8a4818"/><polygon points="960.7,522.5 955.7,527.9 948.0,526.7 945.3,520.1 950.3,514.7 958.0,515.9" fill="#c4763a"/><polygon points="958.0,521.6 954.4,525.4 948.9,524.6 947.0,519.8 950.6,516.0 956.1,516.8" fill="#cc8246"/></g>
<polygon points="980.0,523.0 1024.0,494.0 1027.0,498.0 983.0,527.0" fill="#c08818" />
<g transform="translate(1056.5,423.5) rotate(54.87)"><ellipse cx="0" cy="115.6" rx="37" ry="27.4" fill="url(#g14)"/><rect x="-37" y="0" width="74" height="115.6" fill="url(#g14)"/><ellipse cx="0" cy="0" rx="37" ry="27.4" fill="#8c8c8c"/><ellipse cx="0" cy="0" rx="32.6" ry="23.0" fill="url(#g13)"/></g>
<polygon points="940.0,462.0 983.0,431.0 985.0,428.0 942.0,459.0" fill="#f0a818" />
<polygon points="942.0,459.0 985.0,428.0 988.0,426.0 945.0,457.0" fill="#857ca8" /></g></svg>
<div class="a" style="left:1566.0px;top:173.96px;font-size:16.4px;line-height:18.32px;color:#dcdcd4;">JOINT 39</div>
<div class="a" style="left:1566.0px;top:212.86px;font-size:15.4px;line-height:17.20px;color:#dcdcd4;font-weight:700;">CHB - Chord and Branches</div>
<div class="a" style="left:1566px;top:238px;width:334px;height:25px;background:#2a3a60;border:1px solid #7f7d72"></div>
<div class="a" style="left:1566.0px;top:286.14px;font-size:17.3px;line-height:19.32px;color:#dcdcd4;">Members</div>
<svg style="left:1879px;top:173px" width="20" height="20">
<path d="M7.5 3h-4.2a1.8 1.8 0 0 0-1.8 1.8v9.4a1.8 1.8 0 0 0 1.8 1.8h9.4a1.8 1.8 0 0 0 1.8-1.8v-4.2" fill="none" stroke="#fff" stroke-width="1.4"/>
<path d="M6.5 11l0.8-3 6.8-6.8 2.2 2.2-6.8 6.8z" fill="none" stroke="#fff" stroke-width="1.4" stroke-linejoin="round"/>
</svg>
<svg style="left:1879px;top:529px" width="20" height="20">
<path d="M7.5 3h-4.2a1.8 1.8 0 0 0-1.8 1.8v9.4a1.8 1.8 0 0 0 1.8 1.8h9.4a1.8 1.8 0 0 0 1.8-1.8v-4.2" fill="none" stroke="#fff" stroke-width="1.4"/>
<path d="M6.5 11l0.8-3 6.8-6.8 2.2 2.2-6.8 6.8z" fill="none" stroke="#fff" stroke-width="1.4" stroke-linejoin="round"/>
</svg>
<div class="a" style="left:1566px;top:322px;width:334px;height:182px;border:1px solid #7f7d72;overflow:hidden"></div>
<svg style="left:1570px;top:329px" width="12" height="12"><rect x="0.5" y="0.5" width="10" height="9" fill="#d8dce4"/><rect x="0.5" y="0.5" width="10" height="3" fill="#f4f4f8"/><rect x="2.5" y="4" width="6" height="1.6" fill="#202838"/></svg>
<div class="a" style="left:1586.0px;top:327.74px;font-size:13px;line-height:14.52px;color:#dcdcd4;font-weight:700;">Chord</div>
<div class="a" style="left:1582px;top:344px;width:318px;height:1px;background:#7f7d72"></div>
<div class="a" style="left:1582px;top:344px;width:1px;height:20px;background:#7f7d72"></div>
<div class="a" style="left:1687px;top:344px;width:1px;height:20px;background:#7f7d72"></div>
<div class="a" style="left:1688px;top:345px;width:211px;height:19px;background:#2a3a60"></div>
<div class="a" style="left:1601.0px;top:349.39px;font-size:11.5px;line-height:12.85px;color:#f4f4f4;">Section</div>
<div class="a" style="left:1690.0px;top:350.12px;font-size:10.7px;line-height:11.95px;color:#f4f4f4;">AS_RHS 300x200x9.0RHS</div>
<div class="a" style="left:1582px;top:364px;width:318px;height:1px;background:#7f7d72"></div>
<div class="a" style="left:1582px;top:364px;width:1px;height:20px;background:#7f7d72"></div>
<div class="a" style="left:1687px;top:364px;width:1px;height:20px;background:#7f7d72"></div>
<div class="a" style="left:1688px;top:365px;width:211px;height:19px;background:#2a3a60"></div>
<div class="a" style="left:1601.0px;top:369.39px;font-size:11.5px;line-height:12.85px;color:#f4f4f4;">Material</div>
<div class="a" style="left:1690.0px;top:370.12px;font-size:10.7px;line-height:11.95px;color:#f4f4f4;">AS_1163 C250</div>
<svg style="left:1570px;top:391px" width="12" height="12"><rect x="0.5" y="0.5" width="10" height="9" fill="#d8dce4"/><rect x="0.5" y="0.5" width="10" height="3" fill="#f4f4f8"/><rect x="2.5" y="4" width="6" height="1.6" fill="#202838"/></svg>
<div class="a" style="left:1586.0px;top:389.74px;font-size:13px;line-height:14.52px;color:#dcdcd4;font-weight:700;">Top right branch (1)</div>
<div class="a" style="left:1566px;top:384px;width:334px;height:1px;background:#7f7d72"></div>
<div class="a" style="left:1582px;top:406px;width:318px;height:1px;background:#7f7d72"></div>
<div class="a" style="left:1582px;top:406px;width:1px;height:21px;background:#7f7d72"></div>
<div class="a" style="left:1687px;top:406px;width:1px;height:21px;background:#7f7d72"></div>
<div class="a" style="left:1688px;top:407px;width:211px;height:20px;background:#2a3a60"></div>
<div class="a" style="left:1601.0px;top:411.39px;font-size:11.5px;line-height:12.85px;color:#f4f4f4;">Section</div>
<div class="a" style="left:1690.0px;top:412.12px;font-size:10.7px;line-height:11.95px;color:#f4f4f4;">AS_CHS 141.3x9.5CHS</div>
<div class="a" style="left:1582px;top:427px;width:318px;height:1px;background:#7f7d72"></div>
<div class="a" style="left:1582px;top:427px;width:1px;height:19px;background:#7f7d72"></div>
<div class="a" style="left:1687px;top:427px;width:1px;height:19px;background:#7f7d72"></div>
<div class="a" style="left:1688px;top:428px;width:211px;height:18px;background:#2a3a60"></div>
<div class="a" style="left:1601.0px;top:432.39px;font-size:11.5px;line-height:12.85px;color:#f4f4f4;">Material</div>
<div class="a" style="left:1690.0px;top:433.12px;font-size:10.7px;line-height:11.95px;color:#f4f4f4;">AS_1163 C250</div>
<div class="a" style="left:1582px;top:446px;width:318px;height:1px;background:#7f7d72"></div>
<div class="a" style="left:1582px;top:446px;width:1px;height:20px;background:#7f7d72"></div>
<div class="a" style="left:1687px;top:446px;width:1px;height:20px;background:#7f7d72"></div>
<div class="a" style="left:1601.0px;top:451.39px;font-size:11.5px;line-height:12.85px;color:#f4f4f4;">Slope angle</div>
<div class="a" style="left:1690.0px;top:452.12px;font-size:10.7px;line-height:11.95px;color:#f4f4f4;">45</div>
<div class="a" style="left:1582px;top:466px;width:318px;height:1px;background:#7f7d72"></div>
<div class="a" style="left:1582px;top:466px;width:1px;height:20px;background:#7f7d72"></div>
<div class="a" style="left:1687px;top:466px;width:1px;height:20px;background:#7f7d72"></div>
<div class="a" style="left:1601.0px;top:471.39px;font-size:11.5px;line-height:12.85px;color:#f4f4f4;">Rotation (°)</div>
<div class="a" style="left:1690.0px;top:472.12px;font-size:10.7px;line-height:11.95px;color:#f4f4f4;">0</div>
<div class="a" style="left:1567px;top:487px;width:332px;height:16px;overflow:hidden">
<svg style="left:3px;top:6px" width="12" height="12"><rect x="0.5" y="0.5" width="10" height="9" fill="#d8dce4"/><rect x="0.5" y="0.5" width="10" height="3" fill="#f4f4f8"/><rect x="2.5" y="4" width="6" height="1.6" fill="#202838"/></svg>
<div class="a" style="left:19px;top:5.04px;font-size:13px;line-height:14px;font-weight:700;color:#dcdcd4">Top branch (2)</div></div>
<div class="a" style="left:1566px;top:486px;width:334px;height:1px;background:#7f7d72"></div>
<div class="a" style="left:1564px;top:518px;width:340px;height:1px;background:#b8b8b8"></div>
<div class="a" style="left:1728px;top:517px;width:10px;height:3px;background:#001a4a"></div>
<div class="a" style="left:1729px;top:518px;width:2px;height:1px;background:#c8c8c8"></div>
<div class="a" style="left:1732px;top:518px;width:2px;height:1px;background:#c8c8c8"></div>
<div class="a" style="left:1735px;top:518px;width:2px;height:1px;background:#c8c8c8"></div>
<div class="a" style="left:1562px;top:520px;width:1px;height:167px;background:#7a7a72"></div>
<div class="a" style="left:1566.0px;top:529.78px;font-size:16.6px;line-height:18.54px;color:#dcdcd4;">Gusset</div>
<div class="a" style="left:1566px;top:565px;width:334px;height:75px;border:1px solid #7f7d72"></div>
<div class="a" style="left:1687px;top:565px;width:1px;height:21px;background:#7f7d72"></div>
<div class="a" style="left:1585.0px;top:570.39px;font-size:11.5px;line-height:12.85px;color:#f4f4f4;">Template</div>
<div class="a" style="left:1690.0px;top:571.12px;font-size:10.7px;line-height:11.95px;color:#f4f4f4;">TGB</div>
<div class="a" style="left:1566px;top:585px;width:334px;height:1px;background:#7f7d72"></div>
<div class="a" style="left:1687px;top:585px;width:1px;height:21px;background:#7f7d72"></div>
<div class="a" style="left:1585.0px;top:590.39px;font-size:11.5px;line-height:12.85px;color:#f4f4f4;">Connection</div>
<div class="a" style="left:1690.0px;top:591.12px;font-size:10.7px;line-height:11.95px;color:#f4f4f4;">Gusset</div>
<div class="a" style="left:1566px;top:605px;width:334px;height:1px;background:#7f7d72"></div>
<div class="a" style="left:1687px;top:605px;width:1px;height:21px;background:#7f7d72"></div>
<div class="a" style="left:1688px;top:606px;width:211px;height:20px;background:#2a3a60"></div>
<div class="a" style="left:1585.0px;top:610.39px;font-size:11.5px;line-height:12.85px;color:#f4f4f4;">Design code</div>
<div class="a" style="left:1690.0px;top:611.12px;font-size:10.7px;line-height:11.95px;color:#f4f4f4;">AS 4100-2020</div>
<div class="a" style="left:1566px;top:625px;width:334px;height:1px;background:#7f7d72"></div>
<div class="a" style="left:1562px;top:654px;width:343px;height:33px;border:1px solid #7f7d72"></div>
<div class="a" style="left:1562px;top:675px;width:343px;height:1px;background:#7f7d72"></div>
<div class="a" style="left:1712px;top:655px;width:1px;height:20px;background:#7f7d72"></div>
<div class="a" style="left:1713px;top:655px;width:191px;height:20px;background:#2a3a60"></div>
<div class="a" style="left:1580.0px;top:658.76px;font-size:12.2px;line-height:13.63px;color:#f4f4f4;">Additional notes</div>
<svg style="left:1800px;top:658px" width="16" height="14"><path d="M0.5 0.5h11l3 3v9.5h-14z" fill="#fff"/><text x="5" y="10.5" font-size="8.5" font-style="italic" fill="#707070" font-family="Liberation Serif">a</text></svg>
<div class="a" style="left:4px;top:1038px;width:1912px;height:226px;background:#283652"></div>
<div class="a" style="left:763.0px;top:1046.34px;font-size:20.4px;line-height:22.79px;color:#d0d8e6;">Gusset connections</div>
<div class="a" style="left:4px;top:1038px;width:300px;height:40px;overflow:hidden">
<div class="a" style="left:-24.5px;top:7.54px;font-size:20.4px;line-height:22px;color:#d0d8e6">Base plate connections</div></div>
<div class="a" style="left:4px;top:1038px;width:1912px;height:226px;overflow:hidden"><div class="a" style="left:-4px;top:-1038px;width:1920px;height:1293px">
<div class="a" style="left:-22px;top:1078px;width:184px;height:164px;border:1px solid #a4a4a4;background:linear-gradient(90deg,#3c3c3c 0%,#474747 50%,#565656 100%);overflow:hidden">
<svg style="left:-1px;top:-1px" width="184" height="164"><polygon points="28.8,114.0 92.0,80.5 155.3,114.0 92.5,149.0" fill="#a2a2a2"/><polygon points="28.8,114.0 92.5,149.0 92.5,170.0 29.7,135.8" fill="#a4a288"/><polygon points="92.5,149.0 155.3,114.0 154.4,136.7 92.5,170.0" fill="#8a8870"/><polygon points="70.0,117.0 96.0,104.0 113.0,109.5 81.0,127.0" fill="#dcdcdc"/><polygon points="73.8,19.5 85.0,24.0 85.0,116.0 73.8,110.0" fill="#8c8c8c"/><polygon points="85.0,24.0 99.0,17.0 99.0,109.0 85.0,116.0" fill="#5e5e5e"/><polygon points="85.0,24.0 91.0,21.0 91.0,113.0 85.0,116.0" fill="#6a6a6a"/><polygon points="99.0,10.0 109.4,15.0 109.4,106.0 99.0,101.0" fill="#8e8e8e"/><polygon points="73.8,19.5 76.0,18.5 85.0,22.5 85.0,24.0" fill="#b0b0b0"/><polygon points="99.0,10.0 101.0,9.0 109.4,13.5 109.4,15.0" fill="#b0b0b0"/><polygon points="76.0,113.0 106.0,101.0 108.0,104.0 80.0,119.0" fill="#8078a0"/><path d="M77 113 L106 101" stroke="#e8c020" stroke-width="1" stroke-dasharray="1.5 1.5"/></svg>
<div class="a" style="right:7px;top:5.54px;font-size:15.2px;line-height:18px;color:#eeeeee">CB</div>
<div class="a" style="left:2px;top:144.94px;font-size:12px;line-height:14px;color:#e8e820">0.90 - DL</div>
</div>
<div class="a" style="left:170px;top:1078px;width:184px;height:164px;border:1px solid #a4a4a4;background:linear-gradient(90deg,#3c3c3c 0%,#474747 50%,#565656 100%);overflow:hidden">
<svg style="left:-1px;top:-1px" width="184" height="164"><polygon points="28.8,114.0 92.0,80.5 155.3,114.0 92.5,149.0" fill="#a2a2a2"/><polygon points="28.8,114.0 92.5,149.0 92.5,170.0 29.7,135.8" fill="#a4a288"/><polygon points="92.5,149.0 155.3,114.0 154.4,136.7 92.5,170.0" fill="#8a8870"/><polygon points="70.0,117.0 96.0,104.0 113.0,109.5 81.0,127.0" fill="#dcdcdc"/><polygon points="73.8,19.5 85.0,24.0 85.0,116.0 73.8,110.0" fill="#8c8c8c"/><polygon points="85.0,24.0 99.0,17.0 99.0,109.0 85.0,116.0" fill="#5e5e5e"/><polygon points="85.0,24.0 91.0,21.0 91.0,113.0 85.0,116.0" fill="#6a6a6a"/><polygon points="99.0,10.0 109.4,15.0 109.4,106.0 99.0,101.0" fill="#8e8e8e"/><polygon points="73.8,19.5 76.0,18.5 85.0,22.5 85.0,24.0" fill="#b0b0b0"/><polygon points="99.0,10.0 101.0,9.0 109.4,13.5 109.4,15.0" fill="#b0b0b0"/><polygon points="76.0,113.0 106.0,101.0 108.0,104.0 80.0,119.0" fill="#8078a0"/><path d="M77 113 L106 101" stroke="#e8c020" stroke-width="1" stroke-dasharray="1.5 1.5"/><path d="M81 118v30M85 116v32M96 112v22M100 110v28" stroke="#d8a070" stroke-width="1"/></svg>
<div class="a" style="left:7px;top:5.96px;font-size:17.5px;line-height:20px;font-weight:700;color:#a4c6f2">31</div>
<div class="a" style="right:7px;top:5.54px;font-size:15.2px;line-height:18px;color:#eeeeee">CB</div>
<div class="a" style="left:7px;top:144.94px;font-size:12px;line-height:14px;color:#22e022">0.63 - DL</div>
</div>
<div class="a" style="left:362px;top:1078px;width:184px;height:164px;border:1px solid #a4a4a4;background:linear-gradient(90deg,#3c3c3c 0%,#474747 50%,#565656 100%);overflow:hidden">
<svg style="left:-1px;top:-1px" width="184" height="164"><polygon points="64.3,100.0 92.0,111.0 92.0,143.4 65.0,131.0" fill="#a09e84"/><polygon points="92.0,111.0 119.7,99.0 119.0,128.6 92.0,143.4" fill="#8e8c72"/><polygon points="64.3,99.0 92.0,87.5 119.7,99.0 92.0,111.0" fill="#e4e4e4"/><polygon points="64.3,99.0 92.0,111.0 92.0,115.0 64.3,104.0" fill="#f0f0f0"/><polygon points="92.0,111.0 119.7,99.0 119.7,104.0 92.0,115.0" fill="#d8d8d8"/><polygon points="70.0,95.0 90.0,87.0 112.0,96.0 92.0,106.0" fill="#5e5676"/><polygon points="72.0,20.0 92.0,28.0 92.0,103.0 73.0,96.0" fill="#7c7c7c"/><polygon points="92.0,28.0 101.0,24.0 101.0,99.0 92.0,103.0" fill="#5e5e5e"/><polygon points="90.0,12.0 101.0,17.0 101.0,99.0 96.0,97.0 96.0,19.0 90.0,16.0" fill="#888888"/><polygon points="101.0,17.0 111.8,21.5 111.8,96.0 101.0,99.0" fill="#8e8e8e"/><polygon points="72.0,20.0 76.0,18.0 92.0,25.5 92.0,28.0" fill="#a0a0a0"/><polygon points="90.0,12.0 94.0,10.0 111.8,19.5 111.8,21.5" fill="#a0a0a0"/><rect x="96" y="96" width="5" height="9" fill="#c07030"/><rect x="105" y="92" width="5" height="8" fill="#c07030"/><path d="M72 96 L92 106 L112 96" stroke="#e8c020" stroke-width="0.9" fill="none" stroke-dasharray="1.5 1.2"/></svg>
<div class="a" style="left:7px;top:5.96px;font-size:17.5px;line-height:20px;font-weight:700;color:#a4c6f2">32</div>
<div class="a" style="right:7px;top:5.54px;font-size:15.2px;line-height:18px;color:#eeeeee">CB</div>
<div class="a" style="left:7px;top:144.94px;font-size:12px;line-height:14px;color:#e8101e">5.00 - DL</div>
</div>
<div class="a" style="left:554px;top:1078px;width:184px;height:164px;border:1px solid #a4a4a4;background:linear-gradient(90deg,#3c3c3c 0%,#474747 50%,#565656 100%);overflow:hidden">
<svg style="left:-1px;top:-1px" width="184" height="164"><polygon points="64.3,100.0 92.0,111.0 92.0,143.4 65.0,131.0" fill="#a09e84"/><polygon points="92.0,111.0 119.7,99.0 119.0,128.6 92.0,143.4" fill="#8e8c72"/><polygon points="64.3,99.0 92.0,87.5 119.7,99.0 92.0,111.0" fill="#e4e4e4"/><polygon points="64.3,99.0 92.0,111.0 92.0,115.0 64.3,104.0" fill="#f0f0f0"/><polygon points="92.0,111.0 119.7,99.0 119.7,104.0 92.0,115.0" fill="#d8d8d8"/><polygon points="70.0,95.0 90.0,87.0 112.0,96.0 92.0,106.0" fill="#5e5676"/><polygon points="72.0,20.0 92.0,28.0 92.0,103.0 73.0,96.0" fill="#7c7c7c"/><polygon points="92.0,28.0 101.0,24.0 101.0,99.0 92.0,103.0" fill="#5e5e5e"/><polygon points="90.0,12.0 101.0,17.0 101.0,99.0 96.0,97.0 96.0,19.0 90.0,16.0" fill="#888888"/><polygon points="101.0,17.0 111.8,21.5 111.8,96.0 101.0,99.0" fill="#8e8e8e"/><polygon points="72.0,20.0 76.0,18.0 92.0,25.5 92.0,28.0" fill="#a0a0a0"/><polygon points="90.0,12.0 94.0,10.0 111.8,19.5 111.8,21.5" fill="#a0a0a0"/><polygon points="92.0,96.0 101.0,92.0 111.0,96.0 96.0,104.0" fill="#8e86b0"/><path d="M72 96 L92 106 L112 96" stroke="#e8c020" stroke-width="0.9" fill="none" stroke-dasharray="1.5 1.2"/></svg>
<div class="a" style="left:7px;top:5.96px;font-size:17.5px;line-height:20px;font-weight:700;color:#a4c6f2">33</div>
<div class="a" style="right:7px;top:5.54px;font-size:15.2px;line-height:18px;color:#eeeeee">CB</div>
<div class="a" style="left:7px;top:144.94px;font-size:12px;line-height:14px;color:#e8e820">0.95 - DL</div>
</div>
<div class="a" style="left:763px;top:1078px;width:184px;height:164px;border:1px solid #a4a4a4;background:linear-gradient(90deg,#3c3c3c 0%,#474747 50%,#565656 100%);overflow:hidden">
<svg style="left:-1px;top:-1px" width="184" height="164"><polygon points="31.6,14.8 62.3,2.0 62.0,100.0 49.4,109.8 34.6,115.7" fill="#8c8c8c"/><polygon points="46.5,8.9 73.2,21.7 73.0,118.0 49.4,109.8" fill="#747474"/><polygon points="57.4,26.7 89.0,13.8 89.0,115.7 60.3,129.6" fill="#8e8e8e"/><polygon points="57.4,26.7 89.0,13.8 89.0,15.5 57.6,28.5" fill="#a8a8a8"/><polygon points="74.0,58.0 98.0,58.0 98.0,89.0 74.0,89.0" fill="#18901a"/><path d="M74 58v31" stroke="#e8a818" stroke-width="1.5"/><circle cx="78" cy="65" r="2.2" fill="#b06828"/><circle cx="84" cy="65" r="2.2" fill="#b06828"/><circle cx="80" cy="74" r="2.2" fill="#b06828"/><circle cx="82" cy="82" r="2.2" fill="#b06828"/><circle cx="88" cy="84" r="2.2" fill="#b06828"/><defs><linearGradient id="ct34" x1="0" y1="0" x2="0" y2="1"><stop offset="0" stop-color="#9a9a9a"/><stop offset="0.35" stop-color="#b8b8b8"/><stop offset="1" stop-color="#4a4a4a"/></linearGradient></defs><rect x="94" y="60" width="40" height="3" fill="#6a6090"/><rect x="94" y="88" width="40" height="3" fill="#6a6090"/><path d="M98 63 h40 v27 h-40 a6 13.5 0 0 1 0 -27z" fill="url(#ct34)"/><ellipse cx="138.5" cy="76.3" rx="9.5" ry="14" fill="#a8a8a8"/><ellipse cx="139" cy="76.5" rx="8" ry="12.5" fill="#5a5a5a"/><ellipse cx="141" cy="78" rx="5.5" ry="10" fill="#a0a0a0"/><path d="M100 62h22" stroke="#e8a818" stroke-width="1.2"/></svg>
<div class="a" style="left:7px;top:5.96px;font-size:17.5px;line-height:20px;font-weight:700;color:#a4c6f2">34</div>
<div class="a" style="right:7px;top:5.54px;font-size:15.2px;line-height:18px;color:#eeeeee">CBB</div>
<div class="a" style="left:7px;top:144.94px;font-size:12px;line-height:14px;color:#e8101e">1.85 - DL</div>
</div>
<div class="a" style="left:955px;top:1078px;width:184px;height:164px;border:1px solid #a4a4a4;background:linear-gradient(90deg,#3c3c3c 0%,#474747 50%,#565656 100%);overflow:hidden">
<svg style="left:-1px;top:-1px" width="184" height="164"><polygon points="31.6,14.8 62.3,2.0 62.0,100.0 49.4,109.8 34.6,115.7" fill="#8c8c8c"/><polygon points="46.5,8.9 73.2,21.7 73.0,118.0 49.4,109.8" fill="#747474"/><polygon points="57.4,26.7 89.0,13.8 89.0,115.7 60.3,129.6" fill="#8e8e8e"/><polygon points="57.4,26.7 89.0,13.8 89.0,15.5 57.6,28.5" fill="#a8a8a8"/><polygon points="72.0,62.0 99.0,62.0 99.0,90.0 72.0,90.0" fill="#18901a"/><circle cx="78" cy="69" r="2.2" fill="#b06828"/><circle cx="85" cy="70" r="2.2" fill="#b06828"/><circle cx="79" cy="80" r="2.2" fill="#b06828"/><circle cx="86" cy="81" r="2.2" fill="#b06828"/><polygon points="98.0,66.0 112.0,58.0 114.0,60.0 100.0,90.0 102.0,93.0" fill="#5e5676"/><polygon points="100.0,66.0 144.0,63.0 148.0,79.0 137.0,89.0 103.0,88.0" fill="#929292"/><polygon points="100.0,66.0 112.0,60.0 144.0,63.0 100.0,68.0" fill="#a4a4a4"/><polygon points="137.0,71.0 148.0,79.0 137.0,89.0" fill="#7a7a7a"/><path d="M100 66 L112 59 M100 67 L103 88" stroke="#e8a818" stroke-width="1.2"/></svg>
<div class="a" style="left:7px;top:5.96px;font-size:17.5px;line-height:20px;font-weight:700;color:#a4c6f2">35</div>
<div class="a" style="right:7px;top:5.54px;font-size:15.2px;line-height:18px;color:#eeeeee">CBB</div>
<div class="a" style="left:7px;top:144.94px;font-size:12px;line-height:14px;color:#e8101e">1.92 - DL</div>
</div>
<div class="a" style="left:1147px;top:1078px;width:184px;height:164px;border:1px solid #a4a4a4;background:linear-gradient(90deg,#3c3c3c 0%,#474747 50%,#565656 100%);overflow:hidden">
<svg style="left:-1px;top:-1px" width="184" height="164"><polygon points="40.7,36.6 63.1,45.8 63.1,128.0 43.8,116.8" fill="#8e8e8e"/><polygon points="63.1,45.8 84.4,36.6 84.4,117.9 63.1,128.0" fill="#767676"/><polygon points="40.7,36.6 63.1,27.5 84.4,36.6 63.1,45.8" fill="#b4b4b4"/><polygon points="44.0,36.6 63.1,29.5 81.0,36.6 63.1,43.5" fill="#8a8a8a"/><polygon points="63.1,29.5 81.0,36.6 63.1,43.5" fill="#9c9c9c"/><polygon points="74.0,73.0 98.0,63.0 106.0,80.0 74.0,96.0" fill="#18901a"/><path d="M74 73v23" stroke="#e8a818" stroke-width="1.5"/><circle cx="81" cy="77" r="2.1" fill="#b06828"/><circle cx="88" cy="73" r="2.1" fill="#b06828"/><circle cx="84" cy="85" r="2.1" fill="#b06828"/><circle cx="92" cy="81" r="2.1" fill="#b06828"/><polygon points="96.0,66.0 115.0,56.0 122.0,72.0 104.0,82.0" fill="#6a6090"/><defs><linearGradient id="ct36" gradientUnits="userSpaceOnUse" x1="0" y1="-10" x2="0" y2="10"><stop offset="0" stop-color="#9c9c9c"/><stop offset="0.4" stop-color="#a8a8a8"/><stop offset="1" stop-color="#3e3e3e"/></linearGradient></defs><g transform="translate(104,74) rotate(-27)"><rect x="0" y="-10.5" width="33" height="21" fill="url(#ct36)"/><ellipse cx="0" cy="0" rx="5" ry="10.5" fill="#5a5a5a"/><path d="M1 -10 a5 10.5 0 0 0 0 21" stroke="#f0c020" stroke-width="1" fill="none"/><ellipse cx="33" cy="0" rx="7" ry="10.5" fill="#9a9a9a"/><ellipse cx="34" cy="0" rx="5.5" ry="9" fill="#686868"/></g></svg>
<div class="a" style="left:7px;top:5.96px;font-size:17.5px;line-height:20px;font-weight:700;color:#a4c6f2">36</div>
<div class="a" style="right:7px;top:5.54px;font-size:15.2px;line-height:18px;color:#eeeeee">CBB</div>
<div class="a" style="left:7px;top:144.94px;font-size:12px;line-height:14px;color:#e8e820">0.96 - DL</div>
</div>
<div class="a" style="left:1339px;top:1078px;width:184px;height:164px;border:1px solid #a4a4a4;background:linear-gradient(90deg,#3c3c3c 0%,#474747 50%,#565656 100%);overflow:hidden">
<svg style="left:-1px;top:-1px" width="184" height="164"><polygon points="48.4,9.3 69.0,2.2 69.0,120.0 60.6,122.2 51.6,126.7" fill="#8e8e8e"/><polygon points="58.7,6.7 69.0,2.2 69.0,127.0 60.6,122.2" fill="#9a9a9a"/><polygon points="60.0,8.0 88.2,9.3 88.2,30.0 68.3,17.6 69.0,127.0 60.0,122.0" fill="#7e7e7e"/><polygon points="68.3,17.6 88.2,9.3 88.2,127.4 69.0,137.0" fill="#8a8a8a"/><polygon points="78.6,40.0 100.4,50.0 100.4,70.0 78.6,60.0" fill="#18901a"/><polygon points="78.0,60.0 107.0,42.0 108.0,54.0 90.0,68.0" fill="#9a9a9a"/><path d="M78 59 L108 40" stroke="#303030" stroke-width="1"/><polygon points="75.4,63.2 131.9,79.9 122.2,86.3 76.0,67.0" fill="#b0b0b0"/><polygon points="78.6,67.0 126.0,85.0 126.0,112.0 78.6,91.4" fill="#9a9a9a"/><polygon points="76.0,94.0 131.2,112.0 121.0,117.7 77.0,98.0" fill="#b4b4b4"/><polygon points="74.0,70.0 84.0,69.0 85.0,87.0 74.0,87.0" fill="#5e5676"/><circle cx="77" cy="73" r="1.3" fill="#c07030"/><circle cx="81" cy="73" r="1.3" fill="#c07030"/><circle cx="77" cy="78" r="1.3" fill="#c07030"/><circle cx="81" cy="78" r="1.3" fill="#c07030"/><circle cx="77" cy="83" r="1.3" fill="#c07030"/><circle cx="81" cy="83" r="1.3" fill="#c07030"/><polygon points="78.6,97.0 100.0,108.0 100.0,112.0 78.6,107.0" fill="#18901a"/><polygon points="80.0,108.0 100.0,104.0 106.8,119.7 90.0,128.7" fill="#a4a4a4"/></svg>
<div class="a" style="left:7px;top:5.96px;font-size:17.5px;line-height:20px;font-weight:700;color:#a4c6f2">37</div>
<div class="a" style="right:7px;top:5.54px;font-size:15.2px;line-height:18px;color:#eeeeee">CBB</div>
<div class="a" style="left:7px;top:144.94px;font-size:12px;line-height:14px;color:#22e022">0.21 - DL</div>
</div>
<div class="a" style="left:1531px;top:1078px;width:184px;height:164px;border:1px solid #a4a4a4;background:linear-gradient(90deg,#3c3c3c 0%,#474747 50%,#565656 100%);overflow:hidden">
<svg style="left:-1px;top:-1px" width="184" height="164"><polygon points="33.0,64.5 44.0,58.7 156.9,115.2 146.6,121.0" fill="#aaaaaa"/><polygon points="38.8,68.3 150.5,122.2 150.5,145.3 39.4,90.8" fill="#969696"/><polygon points="34.3,93.4 39.4,90.8 155.0,146.6 144.0,153.0" fill="#b2b2b2"/><polygon points="33.0,64.5 146.6,121.0 148.0,123.0 36.0,67.0" fill="#8a8a8a"/><path d="M62 68 L74.7 59.3 L112 78.6 L123.5 97.8 L122.2 103.6 L62.5 74.7 Z" fill="#18901a"/><path d="M62.5 74.7 L122.2 103.6" stroke="#e8c020" stroke-width="1"/><defs><linearGradient id="c38a" gradientUnits="userSpaceOnUse" x1="-7" y1="0" x2="7" y2="0"><stop offset="0" stop-color="#909090"/><stop offset="0.45" stop-color="#f0f0f0"/><stop offset="1" stop-color="#606060"/></linearGradient><linearGradient id="c38b" gradientUnits="userSpaceOnUse" x1="-7" y1="0" x2="7" y2="0"><stop offset="0" stop-color="#8a8a8a"/><stop offset="0.4" stop-color="#a8a8a8"/><stop offset="1" stop-color="#555"/></linearGradient><linearGradient id="c38c" gradientUnits="userSpaceOnUse" x1="83.7" y1="0" x2="97.7" y2="0"><stop offset="0" stop-color="#8c8c8c"/><stop offset="0.4" stop-color="#b0b0b0"/><stop offset="1" stop-color="#6a6a6a"/></linearGradient></defs><g transform="translate(53.5,39.7) rotate(-31)"><rect x="-7" y="0" width="14" height="26" fill="url(#c38a)"/><ellipse cx="0" cy="0" rx="7" ry="4" fill="url(#c38a)"/></g><polygon points="63.0,65.0 72.0,59.0 77.0,70.0 68.0,76.0" fill="#5e5676"/><rect x="83.7" y="43" width="14" height="28" fill="url(#c38c)"/><ellipse cx="90.7" cy="43" rx="7" ry="3.3" fill="#a8a8a8"/><ellipse cx="90.7" cy="43.3" rx="5.8" ry="2.5" fill="#7a7a7a"/><polygon points="87.0,70.0 97.0,70.0 97.0,80.0 87.0,77.0" fill="#5e5676"/><polygon points="107.0,87.0 117.0,80.0 122.0,93.0 112.0,98.0" fill="#5e5676"/><g transform="translate(131.2,77.3) rotate(57.7)"><rect x="-7.5" y="0" width="15" height="22" fill="url(#c38b)"/><ellipse cx="0" cy="0" rx="7.5" ry="5" fill="#a0a0a0"/><ellipse cx="0" cy="0" rx="6" ry="3.8" fill="#6a6a6a"/></g><circle cx="68" cy="68" r="1.3" fill="#c07030"/><circle cx="71" cy="73" r="1.3" fill="#c07030"/><circle cx="90" cy="74" r="1.3" fill="#c07030"/><circle cx="94" cy="76" r="1.3" fill="#c07030"/><circle cx="111" cy="90" r="1.3" fill="#c07030"/><circle cx="114" cy="95" r="1.3" fill="#c07030"/></svg>
<div class="a" style="left:7px;top:5.96px;font-size:17.5px;line-height:20px;font-weight:700;color:#a4c6f2">38</div>
<div class="a" style="right:7px;top:5.54px;font-size:15.2px;line-height:18px;color:#eeeeee">CHB</div>
<div class="a" style="left:7px;top:144.94px;font-size:12px;line-height:14px;color:#22e022">0.87 - DL</div>
</div>
<div class="a" style="left:1720px;top:1075px;width:190px;height:170px;background:#0a7ad8"></div>
<div class="a" style="left:1723px;top:1078px;width:184px;height:164px;border:1px solid #a4a4a4;background:linear-gradient(135deg,#001446 0%,#00205e 45%,#0a3486 100%);overflow:hidden">
<svg style="left:-1px;top:-1px" width="184" height="164"><g transform="translate(-65.59999999999991,-28.700000000000045) scale(0.185)"><polygon points="697.0,440.0 1003.0,590.0 1003.0,762.0 925.0,810.0 768.0,726.0 700.0,601.0" fill="url(#g1)" /><polygon points="729.0,615.0 757.0,629.0 783.0,671.0 712.0,722.0 675.0,660.0" fill="#5d5376" /><g transform="translate(724.0,665.0) rotate(54.90)"><ellipse cx="0" cy="90.4" rx="32.5" ry="22" fill="url(#g2)"/><rect x="-32.5" y="0" width="65.0" height="90.4" fill="url(#g2)"/><ellipse cx="0" cy="0" rx="32.5" ry="23" fill="#5d5376"/></g><polygon points="729.0,615.0 757.0,629.0 783.0,671.0 742.7,691.6 705.3,638.4" fill="#5d5376" /><polygon points="757.0,629.0 762.0,627.0 787.0,669.0 783.0,671.0" fill="#857ca8" /><g transform="translate(724,665) rotate(54.9)"><path d="M-32.5 0 A32.5 23 0 0 0 32.5 0" fill="none" stroke="#c4c4c4" stroke-width="3"/></g><polygon points="675.0,659.0 705.0,637.0 707.0,640.0 677.0,662.0" fill="#e0a020" /><polygon points="709.0,718.0 741.0,693.0 743.0,696.0 711.0,721.0" fill="#b08020" /><g><polygon points="751.2,635.9 746.2,641.3 738.5,640.1 735.8,633.5 740.8,628.1 748.5,629.3" fill="#6e3410"/><polygon points="750.6,634.8 745.6,640.2 737.9,639.0 735.2,632.4 740.2,627.0 747.9,628.2" fill="#8a4818"/><polygon points="750.0,633.7 745.0,639.1 737.3,637.9 734.6,631.3 739.6,625.9 747.3,627.1" fill="#c4763a"/><polygon points="747.3,632.8 743.7,636.6 738.2,635.8 736.3,631.0 739.9,627.2 745.4,628.0" fill="#cc8246"/></g><g><polygon points="734.9,647.4 729.9,652.8 722.2,651.6 719.5,645.0 724.5,639.6 732.2,640.8" fill="#6e3410"/><polygon points="734.3,646.3 729.3,651.7 721.6,650.5 718.9,643.9 723.9,638.5 731.6,639.7" fill="#8a4818"/><polygon points="733.7,645.2 728.7,650.6 721.0,649.4 718.3,642.8 723.3,637.4 731.0,638.6" fill="#c4763a"/><polygon points="731.0,644.3 727.4,648.1 721.9,647.3 720.0,642.5 723.6,638.7 729.1,639.5" fill="#cc8246"/></g><g><polygon points="767.4,664.4 762.4,669.8 754.7,668.6 752.0,662.0 757.0,656.6 764.7,657.8" fill="#6e3410"/><polygon points="766.8,663.3 761.8,668.7 754.1,667.5 751.4,660.9 756.4,655.5 764.1,656.7" fill="#8a4818"/><polygon points="766.2,662.2 761.2,667.6 753.5,666.4 750.8,659.8 755.8,654.4 763.5,655.6" fill="#c4763a"/><polygon points="763.5,661.3 759.9,665.1 754.4,664.3 752.5,659.5 756.1,655.7 761.6,656.5" fill="#cc8246"/></g><g><polygon points="751.9,676.2 746.9,681.6 739.2,680.4 736.5,673.8 741.5,668.4 749.2,669.6" fill="#6e3410"/><polygon points="751.3,675.1 746.3,680.5 738.6,679.3 735.9,672.7 740.9,667.3 748.6,668.5" fill="#8a4818"/><polygon points="750.7,674.0 745.7,679.4 738.0,678.2 735.3,671.6 740.3,666.2 748.0,667.4" fill="#c4763a"/><polygon points="748.0,673.1 744.4,676.9 738.9,676.1 737.0,671.3 740.6,667.5 746.1,668.3" fill="#cc8246"/></g><g transform="translate(840.3,777.0) rotate(-0.00)"><ellipse cx="0" cy="130.0" rx="39.3" ry="20" fill="url(#g3)"/><rect x="-39.3" y="0" width="78.6" height="130.0" fill="url(#g3)"/><ellipse cx="0" cy="0" rx="39.3" ry="15" fill="#4e4e4e"/></g><path d="M807 689 L873 721 L873 785 A39.3 15 0 0 1 807 785 Z" fill="#5d5376"/><polygon points="873.0,721.0 879.0,718.0 879.0,856.0 873.0,858.0" fill="#857ca8" /><path d="M801.5 777 A39.3 15 0 0 0 873 784" fill="none" stroke="#c4c4c4" stroke-width="2.5"/><path d="M801.5 777 A39.3 15 0 0 1 807 768" fill="none" stroke="#c4c4c4" stroke-width="2"/><polygon points="866.0,789.0 870.0,789.0 870.0,857.0 866.0,857.0" fill="#e0a018" /><g><polygon points="833.3,720.2 828.3,725.6 820.6,724.4 817.9,717.8 822.9,712.4 830.6,713.6" fill="#6e3410"/><polygon points="832.7,719.1 827.7,724.5 820.0,723.3 817.3,716.7 822.3,711.3 830.0,712.5" fill="#8a4818"/><polygon points="832.1,718.0 827.1,723.4 819.4,722.2 816.7,715.6 821.7,710.2 829.4,711.4" fill="#c4763a"/><polygon points="829.4,717.1 825.8,720.9 820.3,720.1 818.4,715.3 822.0,711.5 827.5,712.3" fill="#cc8246"/></g><g><polygon points="857.1,733.2 852.1,738.6 844.4,737.4 841.7,730.8 846.7,725.4 854.4,726.6" fill="#6e3410"/><polygon points="856.5,732.1 851.5,737.5 843.8,736.3 841.1,729.7 846.1,724.3 853.8,725.5" fill="#8a4818"/><polygon points="855.9,731.0 850.9,736.4 843.2,735.2 840.5,728.6 845.5,723.2 853.2,724.4" fill="#c4763a"/><polygon points="853.2,730.1 849.6,733.9 844.1,733.1 842.2,728.3 845.8,724.5 851.3,725.3" fill="#cc8246"/></g><g><polygon points="833.3,748.4 828.3,753.8 820.6,752.6 817.9,746.0 822.9,740.6 830.6,741.8" fill="#6e3410"/><polygon points="832.7,747.3 827.7,752.7 820.0,751.5 817.3,744.9 822.3,739.5 830.0,740.7" fill="#8a4818"/><polygon points="832.1,746.2 827.1,751.6 819.4,750.4 816.7,743.8 821.7,738.4 829.4,739.6" fill="#c4763a"/><polygon points="829.4,745.3 825.8,749.1 820.3,748.3 818.4,743.5 822.0,739.7 827.5,740.5" fill="#cc8246"/></g><g><polygon points="857.1,761.4 852.1,766.8 844.4,765.6 841.7,759.0 846.7,753.6 854.4,754.8" fill="#6e3410"/><polygon points="856.5,760.3 851.5,765.7 843.8,764.5 841.1,757.9 846.1,752.5 853.8,753.7" fill="#8a4818"/><polygon points="855.9,759.2 850.9,764.6 843.2,763.4 840.5,756.8 845.5,751.4 853.2,752.6" fill="#c4763a"/><polygon points="853.2,758.3 849.6,762.1 844.1,761.3 842.2,756.5 845.8,752.7 851.3,753.5" fill="#cc8246"/></g><polygon points="898.0,741.0 929.0,719.0 964.0,736.0 1031.0,851.0 936.0,806.0" fill="#5d5376" /><g transform="translate(962.4,793.0) rotate(-30.23)"><rect x="-41" y="0" width="82" height="166.7" fill="url(#g4)"/></g><polygon points="964.0,736.0 969.0,734.0 1036.0,849.0 1031.0,851.0" fill="#857ca8" /><polygon points="982.0,782.0 987.0,779.0 1029.0,851.0 1024.0,854.0" fill="#f8e040" /><g><polygon points="928.5,751.6 923.5,757.0 915.8,755.8 913.1,749.2 918.1,743.8 925.8,745.0" fill="#6e3410"/><polygon points="927.9,750.5 922.9,755.9 915.2,754.7 912.5,748.1 917.5,742.7 925.2,743.9" fill="#8a4818"/><polygon points="927.3,749.4 922.3,754.8 914.6,753.6 911.9,747.0 916.9,741.6 924.6,742.8" fill="#c4763a"/><polygon points="924.6,748.5 921.0,752.3 915.5,751.5 913.6,746.7 917.2,742.9 922.7,743.7" fill="#cc8246"/></g><g><polygon points="946.9,739.7 941.9,745.1 934.2,743.9 931.5,737.3 936.5,731.9 944.2,733.1" fill="#6e3410"/><polygon points="946.3,738.6 941.3,744.0 933.6,742.8 930.9,736.2 935.9,730.8 943.6,732.0" fill="#8a4818"/><polygon points="945.7,737.5 940.7,742.9 933.0,741.7 930.3,735.1 935.3,729.7 943.0,730.9" fill="#c4763a"/><polygon points="943.0,736.6 939.4,740.4 933.9,739.6 932.0,734.8 935.6,731.0 941.1,731.8" fill="#cc8246"/></g><g><polygon points="945.9,780.8 940.9,786.2 933.2,785.0 930.5,778.4 935.5,773.0 943.2,774.2" fill="#6e3410"/><polygon points="945.3,779.7 940.3,785.1 932.6,783.9 929.9,777.3 934.9,771.9 942.6,773.1" fill="#8a4818"/><polygon points="944.7,778.6 939.7,784.0 932.0,782.8 929.3,776.2 934.3,770.8 942.0,772.0" fill="#c4763a"/><polygon points="942.0,777.7 938.4,781.5 932.9,780.7 931.0,775.9 934.6,772.1 940.1,772.9" fill="#cc8246"/></g><g><polygon points="964.3,770.0 959.3,775.4 951.6,774.2 948.9,767.6 953.9,762.2 961.6,763.4" fill="#6e3410"/><polygon points="963.7,768.9 958.7,774.3 951.0,773.1 948.3,766.5 953.3,761.1 961.0,762.3" fill="#8a4818"/><polygon points="963.1,767.8 958.1,773.2 950.4,772.0 947.7,765.4 952.7,760.0 960.4,761.2" fill="#c4763a"/><polygon points="960.4,766.9 956.8,770.7 951.3,769.9 949.4,765.1 953.0,761.3 958.5,762.1" fill="#cc8246"/></g><polygon points="635.0,385.0 1152.5,634.0 1085.7,667.3 569.0,415.0" fill="url(#g5)" /><polygon points="569.0,415.0 1085.7,667.3 1081.5,795.7 573.0,533.0" fill="url(#g6)" /><g clip-path="url(#chc)"><polygon points="570.8,411.4 1087.5,663.7 1082.6,673.6 565.9,421.3" fill="url(#g7)" /></g><polygon points="1085.7,667.3 1152.5,634.0 1147.3,758.2 1081.5,795.7" fill="url(#g8)" /><polygon points="1085.0,728.0 1147.0,757.0 1082.0,795.0" fill="#a8a8a8" /><polygon points="1085.7,667.3 1152.5,634.0 1147.3,758.2 1081.5,795.7" fill="none" stroke="#3c3c3c" stroke-width="3" stroke-linejoin="round"/><polygon points="697.0,408.0 763.0,355.0 935.0,431.0 947.0,448.0 1002.0,547.0 1002.0,590.0 995.0,592.0 697.0,449.0" fill="url(#g1)" /><polygon points="763.0,355.0 935.0,431.0 933.0,436.0 763.0,360.0" fill="#1aa21a" /><polygon points="995.0,548.0 1002.0,547.0 1002.0,590.0 995.0,592.0" fill="#0a4a0a" /><polygon points="697.0,446.0 995.0,589.0 995.0,593.0 697.0,450.0" fill="#f5c518" /><g transform="translate(640.0,237.5) rotate(-29.96)"><ellipse cx="0" cy="162.2" rx="34.5" ry="18" fill="#6a6a6a"/><rect x="-34.5" y="0" width="69.0" height="162.2" fill="url(#g9)"/><ellipse cx="0" cy="0" rx="34.5" ry="12" fill="url(#g9)"/></g><g transform="translate(640.0,237.5) rotate(-29.93)"><ellipse cx="0" cy="156.3" rx="34.5" ry="18" fill="url(#g10)"/><rect x="-34.5" y="0" width="69.0" height="156.3" fill="url(#g10)"/></g><polygon points="701.0,304.0 706.0,302.0 741.0,363.0 736.0,366.0" fill="#fff8c0" /><polygon points="706.0,302.0 712.0,299.0 747.0,360.0 741.0,363.0" fill="#857ca8" /><g transform="translate(839.5,236.0) rotate(-0.00)"><ellipse cx="0" cy="166.0" rx="35.5" ry="12" fill="url(#g12)"/><rect x="-35.5" y="0" width="71.0" height="166.0" fill="url(#g12)"/><ellipse cx="0" cy="0" rx="35.5" ry="14.5" fill="#a4a4a4"/><ellipse cx="0" cy="0" rx="31.2" ry="12.2" fill="url(#g11)"/></g><polygon points="809.0,400.0 870.0,400.0 870.0,476.0 809.0,448.0" fill="#5d5376" /><polygon points="870.0,338.0 877.0,334.0 877.0,474.0 870.0,476.0" fill="#857ca8" /><polygon points="861.0,338.0 866.0,338.0 866.0,405.0 861.0,405.0" fill="#f0a818" /><g><polygon points="831.9,413.4 826.9,418.8 819.2,417.6 816.5,411.0 821.5,405.6 829.2,406.8" fill="#6e3410"/><polygon points="831.3,412.3 826.3,417.7 818.6,416.5 815.9,409.9 820.9,404.5 828.6,405.7" fill="#8a4818"/><polygon points="830.7,411.2 825.7,416.6 818.0,415.4 815.3,408.8 820.3,403.4 828.0,404.6" fill="#c4763a"/><polygon points="828.0,410.3 824.4,414.1 818.9,413.3 817.0,408.5 820.6,404.7 826.1,405.5" fill="#cc8246"/></g><g><polygon points="856.9,423.4 851.9,428.8 844.2,427.6 841.5,421.0 846.5,415.6 854.2,416.8" fill="#6e3410"/><polygon points="856.3,422.3 851.3,427.7 843.6,426.5 840.9,419.9 845.9,414.5 853.6,415.7" fill="#8a4818"/><polygon points="855.7,421.2 850.7,426.6 843.0,425.4 840.3,418.8 845.3,413.4 853.0,414.6" fill="#c4763a"/><polygon points="853.0,420.3 849.4,424.1 843.9,423.3 842.0,418.5 845.6,414.7 851.1,415.5" fill="#cc8246"/></g><g><polygon points="831.9,443.4 826.9,448.8 819.2,447.6 816.5,441.0 821.5,435.6 829.2,436.8" fill="#6e3410"/><polygon points="831.3,442.3 826.3,447.7 818.6,446.5 815.9,439.9 820.9,434.5 828.6,435.7" fill="#8a4818"/><polygon points="830.7,441.2 825.7,446.6 818.0,445.4 815.3,438.8 820.3,433.4 828.0,434.6" fill="#c4763a"/><polygon points="828.0,440.3 824.4,444.1 818.9,443.3 817.0,438.5 820.6,434.7 826.1,435.5" fill="#cc8246"/></g><g><polygon points="856.9,455.1 851.9,460.5 844.2,459.3 841.5,452.7 846.5,447.3 854.2,448.5" fill="#6e3410"/><polygon points="856.3,454.0 851.3,459.4 843.6,458.2 840.9,451.6 845.9,446.2 853.6,447.4" fill="#8a4818"/><polygon points="855.7,452.9 850.7,458.3 843.0,457.1 840.3,450.5 845.3,445.1 853.0,446.3" fill="#c4763a"/><polygon points="853.0,452.0 849.4,455.8 843.9,455.0 842.0,450.2 845.6,446.4 851.1,447.2" fill="#cc8246"/></g><polygon points="700.0,393.0 743.0,369.0 781.0,431.0 742.0,462.0" fill="#5d5376" /><polygon points="743.0,369.0 748.0,366.0 787.0,428.0 781.0,431.0" fill="#857ca8" /><g><polygon points="747.4,398.4 742.4,403.8 734.7,402.6 732.0,396.0 737.0,390.6 744.7,391.8" fill="#6e3410"/><polygon points="746.8,397.3 741.8,402.7 734.1,401.5 731.4,394.9 736.4,389.5 744.1,390.7" fill="#8a4818"/><polygon points="746.2,396.2 741.2,401.6 733.5,400.4 730.8,393.8 735.8,388.4 743.5,389.6" fill="#c4763a"/><polygon points="743.5,395.3 739.9,399.1 734.4,398.3 732.5,393.5 736.1,389.7 741.6,390.5" fill="#cc8246"/></g><g><polygon points="730.9,412.4 725.9,417.8 718.2,416.6 715.5,410.0 720.5,404.6 728.2,405.8" fill="#6e3410"/><polygon points="730.3,411.3 725.3,416.7 717.6,415.5 714.9,408.9 719.9,403.5 727.6,404.7" fill="#8a4818"/><polygon points="729.7,410.2 724.7,415.6 717.0,414.4 714.3,407.8 719.3,402.4 727.0,403.6" fill="#c4763a"/><polygon points="727.0,409.3 723.4,413.1 717.9,412.3 716.0,407.5 719.6,403.7 725.1,404.5" fill="#cc8246"/></g><g><polygon points="764.9,428.4 759.9,433.8 752.2,432.6 749.5,426.0 754.5,420.6 762.2,421.8" fill="#6e3410"/><polygon points="764.3,427.3 759.3,432.7 751.6,431.5 748.9,424.9 753.9,419.5 761.6,420.7" fill="#8a4818"/><polygon points="763.7,426.2 758.7,431.6 751.0,430.4 748.3,423.8 753.3,418.4 761.0,419.6" fill="#c4763a"/><polygon points="761.0,425.3 757.4,429.1 751.9,428.3 750.0,423.5 753.6,419.7 759.1,420.5" fill="#cc8246"/></g><g><polygon points="748.3,442.0 743.3,447.4 735.6,446.2 732.9,439.6 737.9,434.2 745.6,435.4" fill="#6e3410"/><polygon points="747.7,440.9 742.7,446.3 735.0,445.1 732.3,438.5 737.3,433.1 745.0,434.3" fill="#8a4818"/><polygon points="747.1,439.8 742.1,445.2 734.4,444.0 731.7,437.4 736.7,432.0 744.4,433.2" fill="#c4763a"/><polygon points="744.4,438.9 740.8,442.7 735.3,441.9 733.4,437.1 737.0,433.3 742.5,434.1" fill="#cc8246"/></g><polygon points="899.0,489.0 983.0,427.0 1024.0,497.0 939.0,559.0" fill="#5d5376" /><polygon points="983.0,427.0 988.0,424.0 1029.0,494.0 1024.0,497.0" fill="#857ca8" /><g><polygon points="926.9,505.1 921.9,510.5 914.2,509.3 911.5,502.7 916.5,497.3 924.2,498.5" fill="#6e3410"/><polygon points="926.3,504.0 921.3,509.4 913.6,508.2 910.9,501.6 915.9,496.2 923.6,497.4" fill="#8a4818"/><polygon points="925.7,502.9 920.7,508.3 913.0,507.1 910.3,500.5 915.3,495.1 923.0,496.3" fill="#c4763a"/><polygon points="923.0,502.0 919.4,505.8 913.9,505.0 912.0,500.2 915.6,496.4 921.1,497.2" fill="#cc8246"/></g><g><polygon points="944.9,535.7 939.9,541.1 932.2,539.9 929.5,533.3 934.5,527.9 942.2,529.1" fill="#6e3410"/><polygon points="944.3,534.6 939.3,540.0 931.6,538.8 928.9,532.2 933.9,526.8 941.6,528.0" fill="#8a4818"/><polygon points="943.7,533.5 938.7,538.9 931.0,537.7 928.3,531.1 933.3,525.7 941.0,526.9" fill="#c4763a"/><polygon points="941.0,532.6 937.4,536.4 931.9,535.6 930.0,530.8 933.6,527.0 939.1,527.8" fill="#cc8246"/></g><g><polygon points="940.6,489.8 935.6,495.2 927.9,494.0 925.2,487.4 930.2,482.0 937.9,483.2" fill="#6e3410"/><polygon points="940.0,488.7 935.0,494.1 927.3,492.9 924.6,486.3 929.6,480.9 937.3,482.1" fill="#8a4818"/><polygon points="939.4,487.6 934.4,493.0 926.7,491.8 924.0,485.2 929.0,479.8 936.7,481.0" fill="#c4763a"/><polygon points="936.7,486.7 933.1,490.5 927.6,489.7 925.7,484.9 929.3,481.1 934.8,481.9" fill="#cc8246"/></g><g><polygon points="961.9,524.7 956.9,530.1 949.2,528.9 946.5,522.3 951.5,516.9 959.2,518.1" fill="#6e3410"/><polygon points="961.3,523.6 956.3,529.0 948.6,527.8 945.9,521.2 950.9,515.8 958.6,517.0" fill="#8a4818"/><polygon points="960.7,522.5 955.7,527.9 948.0,526.7 945.3,520.1 950.3,514.7 958.0,515.9" fill="#c4763a"/><polygon points="958.0,521.6 954.4,525.4 948.9,524.6 947.0,519.8 950.6,516.0 956.1,516.8" fill="#cc8246"/></g><polygon points="980.0,523.0 1024.0,494.0 1027.0,498.0 983.0,527.0" fill="#c08818" /><g transform="translate(1056.5,423.5) rotate(54.87)"><ellipse cx="0" cy="115.6" rx="37" ry="27.4" fill="url(#g14)"/><rect x="-37" y="0" width="74" height="115.6" fill="url(#g14)"/><ellipse cx="0" cy="0" rx="37" ry="27.4" fill="#8c8c8c"/><ellipse cx="0" cy="0" rx="32.6" ry="23.0" fill="url(#g13)"/></g><polygon points="940.0,462.0 983.0,431.0 985.0,428.0 942.0,459.0" fill="#f0a818" /><polygon points="942.0,459.0 985.0,428.0 988.0,426.0 945.0,457.0" fill="#857ca8" /></g></svg>
<div class="a" style="left:7px;top:5.96px;font-size:17.5px;line-height:20px;font-weight:700;color:#a4c6f2">39</div>
<div class="a" style="right:7px;top:5.54px;font-size:15.2px;line-height:18px;color:#eeeeee">CHB</div>
<div class="a" style="left:7px;top:144.94px;font-size:12px;line-height:14px;color:#e8101e">2.07 - DL</div>
</div>
</div></div>
<div class="a" style="left:1px;top:1264px;width:1917px;height:1px;background:#ffffff"></div>
<div class="a" style="left:0px;top:1292px;width:1920px;height:1px;background:#b0b0b0"></div>
<div class="a" style="left:10.0px;top:1274.12px;font-size:11.8px;line-height:13.18px;color:#1e1e1e;">License: Commercial</div>
<div class="a" style="left:136.0px;top:1274.12px;font-size:11.8px;line-height:13.18px;color:#1e1e1e;">Elements: 78</div>
<svg style="left:216px;top:1272px" width="16" height="16"><rect x="0.5" y="0.5" width="13" height="14" rx="1" fill="#b8b8b8" stroke="#505050"/><rect x="3" y="1" width="8" height="5.5" fill="#f4f4f4" stroke="#707070" stroke-width="0.6"/><path d="M4 3h6M4 4.8h6" stroke="#909090" stroke-width="0.7"/><rect x="3.5" y="9" width="7" height="5.5" fill="#202020"/><rect x="7.5" y="10" width="2" height="3.5" fill="#d0d0d0"/></svg>
<div class="a" style="left:237.0px;top:1274.12px;font-size:11.8px;line-height:13.18px;color:#1e1e1e;">Saved</div>
<div class="a" style="left:274px;top:1268px;width:1px;height:22px;background:#d0d0d0"></div>
<div class="a" style="left:1551px;top:1268px;width:1px;height:22px;background:#d0d0d0"></div>
<div class="a" style="left:1561.0px;top:1274.12px;font-size:11.8px;line-height:13.18px;color:#1e1e1e;">SI</div>
<svg style="left:1576px;top:1275px" width="12" height="10"><path d="M2 2.5l4 4 4-4" fill="none" stroke="#707070" stroke-width="1.1"/></svg>
<div class="a" style="left:1593px;top:1268px;width:1px;height:22px;background:#d0d0d0"></div>
<div class="a" style="left:1602.0px;top:1274.12px;font-size:11.8px;line-height:13.18px;color:#1e1e1e;">Condition:</div>
<div class="a" style="left:1663px;top:1269px;width:130px;height:22px;background:#fff;border:1px solid #a8a8a8"></div>
<div class="a" style="left:1666.0px;top:1274.12px;font-size:11.8px;line-height:13.18px;color:#1e1e1e;">DL = Dead Load</div>
<svg style="left:1776px;top:1277px" width="10" height="6"><path d="M1 1h7l-3.5 3.5z" fill="#606060"/></svg>
<div class="a" style="left:1797px;top:1268px;width:1px;height:22px;background:#d0d0d0"></div>
<svg style="left:1804px;top:1272px" width="115" height="20"><g transform="translate(0,0)"><circle cx="6.5" cy="6.5" r="5" fill="#fff" stroke="#404040" stroke-width="1.1"/><path d="M1 9h4v4M9 1v4h4" stroke="#d02020" stroke-width="1" fill="none" stroke-dasharray="1.5 1"/><path d="M10 10l4.5 4.5" stroke="#c89020" stroke-width="2.6"/></g><g transform="translate(26,0)"><circle cx="6.5" cy="6.5" r="5" fill="#fff" stroke="#404040" stroke-width="1.1"/><path d="M4 6.5h5M6.5 4v5" stroke="#d02020" stroke-width="1.3"/><path d="M10 10l4.5 4.5" stroke="#c89020" stroke-width="2.6"/></g><g transform="translate(50,0)"><circle cx="6.5" cy="6.5" r="5" fill="#fff" stroke="#404040" stroke-width="1.1"/><path d="M4 6.5h5" stroke="#d02020" stroke-width="1.3"/><path d="M10 10l4.5 4.5" stroke="#c89020" stroke-width="2.6"/></g><g transform="translate(74,0)"><path d="M8 1l3 3h-2v3h3v-2l3 3-3 3v-2h-3v3h2l-3 3-3-3h2v-3h-3v2l-3-3 3-3v2h3v-3h-2z" fill="#c81818"/></g><path d="M110 13h1M106 17h1M110 17h1M114 17h1M114 13h1M114 9h1" stroke="#a0a0a0" stroke-width="1.5"/></svg>
</body></html>
